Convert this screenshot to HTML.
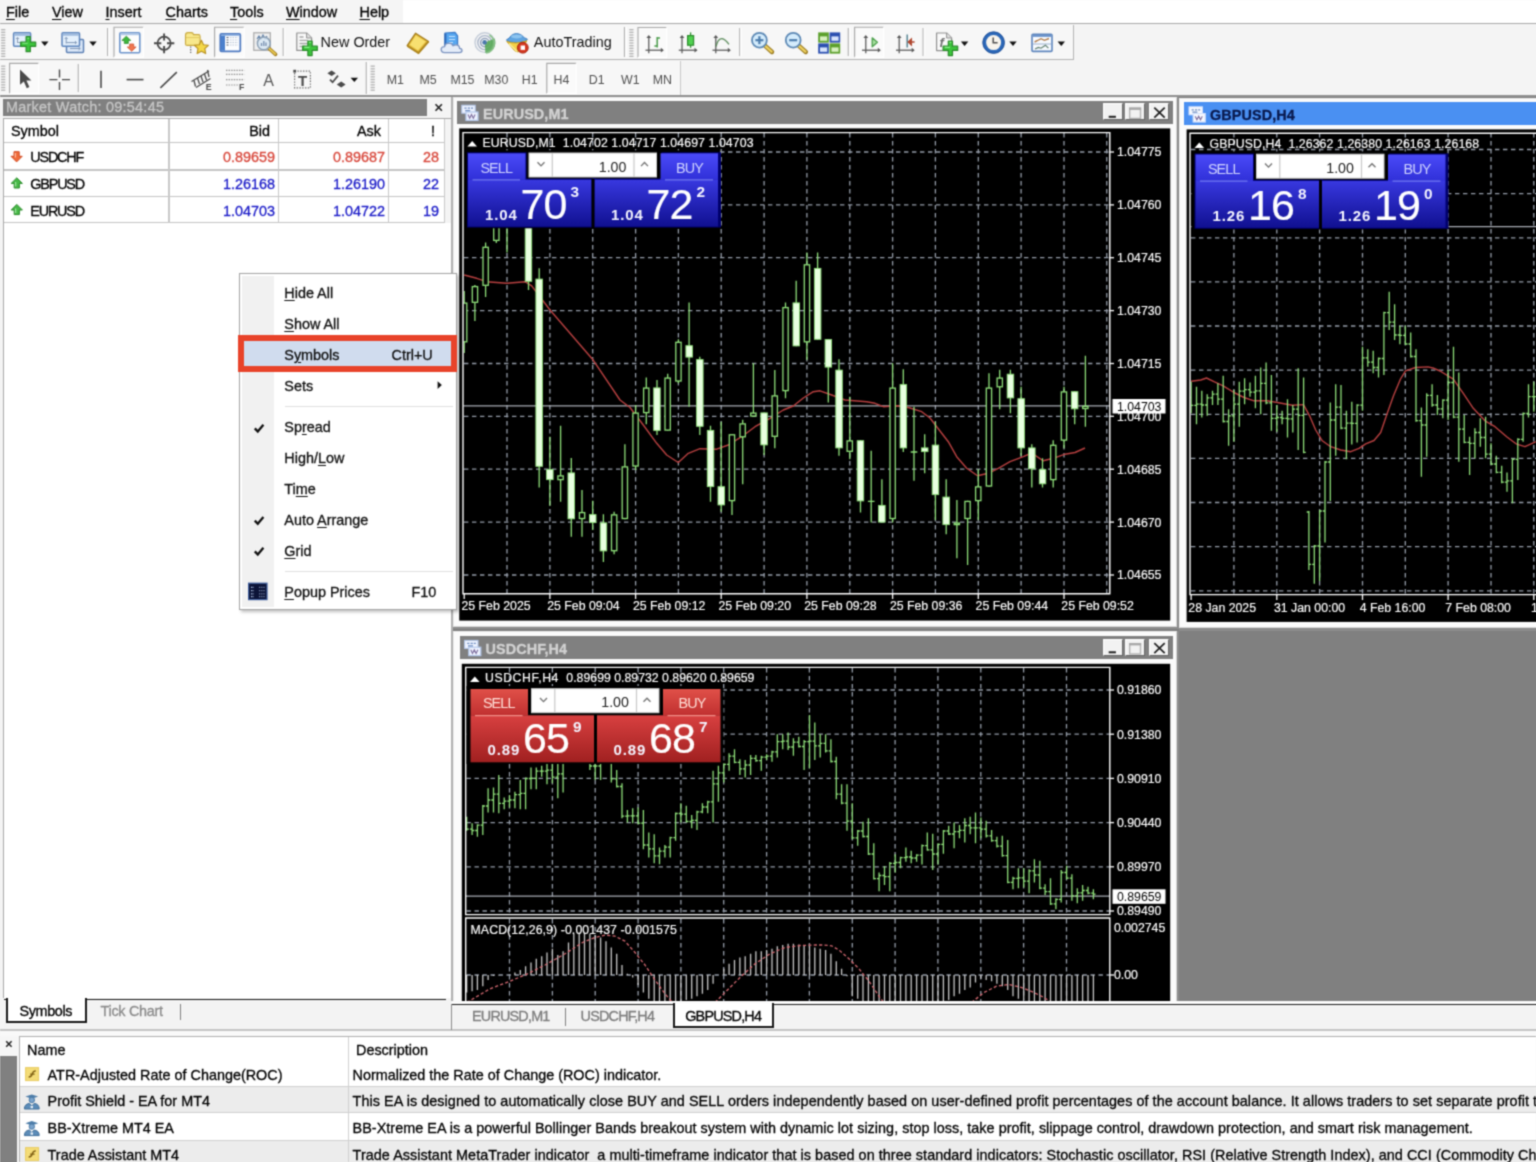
<!DOCTYPE html><html><head><meta charset="utf-8"><title>MetaTrader 4</title><style>
*{box-sizing:border-box;margin:0;padding:0}
html,body{width:1536px;height:1162px;background:#f4f4f4}
body{overflow:hidden}
body{font-family:'Liberation Sans',sans-serif;font-size:14.4px;color:#000;position:relative;line-height:1}
.a{position:absolute;white-space:pre}
.t{position:absolute;white-space:pre;line-height:16px;height:16px;-webkit-text-stroke:0.3px currentColor}
u{text-decoration:underline;text-underline-offset:1.6px;text-decoration-thickness:1.2px}
#menubar{left:0;top:0;width:403px;height:23px;background:#f5f5f5}
#menuw{left:403px;top:0;width:1147px;height:23px;background:#fff}
.hl{position:absolute;height:1.3px;background:#a8a8a8}
.vl{position:absolute;width:1.3px;background:#a8a8a8}
.mw td{}
svg{position:absolute;left:0;top:0;overflow:visible}
svg text[fill="#fff"]{stroke:#fff;stroke-width:.16px}
#root{position:absolute;left:-10px;top:-10px;width:1556px;height:1182px;overflow:hidden;background:#f4f4f4;filter:url(#soft)}
#page{position:absolute;left:10px;top:10px;width:1536px;height:1162px}
#clip{position:absolute;left:0;top:0;width:1536px;height:1162px;overflow:hidden}
.btn{position:absolute;border:1.3px solid;border-color:#a0a0a0 #fff #fff #a0a0a0;background:#f8f8f8}
.grip{position:absolute;width:4.5px;background:repeating-linear-gradient(to bottom,#b8b8b8 0 1.3px,transparent 1.3px 2.67px)}
.tb{position:absolute;font-size:12.6px;color:#505050;line-height:16px;white-space:pre}
.wb{position:absolute;background:#f2f2f2;border:1.3px solid;border-color:#fff #686868 #686868 #fff;width:19.7px;height:17px}
</style></head><body><svg width="0" height="0" style="position:absolute"><defs><filter id="soft" x="0" y="0" width="100%" height="100%" color-interpolation-filters="sRGB"><feConvolveMatrix order="3" kernelMatrix="0.04 0.12 0.04 0.12 0.36 0.12 0.04 0.12 0.04" edgeMode="duplicate" preserveAlpha="true"/></filter></defs></svg><div id="clip"><div id="root"><div id="page">
<div class="a" id="menubar"></div><div class="a" id="menuw"></div>
<div class="t" style="left:6px;top:4.0px;font-size:14.4px;color:#000;"><u>F</u>ile</div>
<div class="t" style="left:52px;top:4.0px;font-size:14.4px;color:#000;"><u>V</u>iew</div>
<div class="t" style="left:105.5px;top:4.0px;font-size:14.4px;color:#000;"><u>I</u>nsert</div>
<div class="t" style="left:165.5px;top:4.0px;font-size:14.4px;color:#000;"><u>C</u>harts</div>
<div class="t" style="left:230px;top:4.0px;font-size:14.4px;color:#000;"><u>T</u>ools</div>
<div class="t" style="left:286px;top:4.0px;font-size:14.4px;color:#000;"><u>W</u>indow</div>
<div class="t" style="left:359.5px;top:4.0px;font-size:14.4px;color:#000;"><u>H</u>elp</div>
<div class="hl" style="left:0;top:22.8px;width:1550px"></div>
<div class="a" style="left:0;top:24px;width:1550px;height:72px;background:#f4f4f4"></div>
<div class="a" style="left:0;top:24.5px;width:1073px;height:34.5px;background:#f7f7f7"></div>
<div class="a" style="left:0;top:60.5px;width:680px;height:34.5px;background:#f7f7f7"></div>
<div class="hl" style="left:0;top:59px;width:1073px;background:#b4b4b4"></div>
<div class="vl" style="left:1072.5px;top:25px;height:34.5px;background:#b4b4b4"></div>
<div class="vl" style="left:679.5px;top:61px;height:34.5px;background:#c8c8c8"></div>
<div class="hl" style="left:0;top:95.2px;width:1550px;background:#909090;height:2px"></div>
<svg width="1536" height="100" viewBox="0 0 1536 100"><rect x="1.1" y="29.00" width="4.2" height="1.35" fill="#b4b4b4"/><rect x="1.1" y="31.67" width="4.2" height="1.35" fill="#b4b4b4"/><rect x="1.1" y="34.33" width="4.2" height="1.35" fill="#b4b4b4"/><rect x="1.1" y="37.00" width="4.2" height="1.35" fill="#b4b4b4"/><rect x="1.1" y="39.67" width="4.2" height="1.35" fill="#b4b4b4"/><rect x="1.1" y="42.34" width="4.2" height="1.35" fill="#b4b4b4"/><rect x="1.1" y="45.00" width="4.2" height="1.35" fill="#b4b4b4"/><rect x="1.1" y="47.67" width="4.2" height="1.35" fill="#b4b4b4"/><rect x="1.1" y="50.34" width="4.2" height="1.35" fill="#b4b4b4"/><rect x="1.1" y="53.00" width="4.2" height="1.35" fill="#b4b4b4"/><rect x="1.1" y="55.67" width="4.2" height="1.35" fill="#b4b4b4"/><rect x="1.1" y="65.50" width="4.2" height="1.35" fill="#b4b4b4"/><rect x="1.1" y="68.17" width="4.2" height="1.35" fill="#b4b4b4"/><rect x="1.1" y="70.83" width="4.2" height="1.35" fill="#b4b4b4"/><rect x="1.1" y="73.50" width="4.2" height="1.35" fill="#b4b4b4"/><rect x="1.1" y="76.17" width="4.2" height="1.35" fill="#b4b4b4"/><rect x="1.1" y="78.84" width="4.2" height="1.35" fill="#b4b4b4"/><rect x="1.1" y="81.50" width="4.2" height="1.35" fill="#b4b4b4"/><rect x="1.1" y="84.17" width="4.2" height="1.35" fill="#b4b4b4"/><rect x="1.1" y="86.84" width="4.2" height="1.35" fill="#b4b4b4"/><rect x="1.1" y="89.50" width="4.2" height="1.35" fill="#b4b4b4"/><rect x="13.6" y="32.7" width="17" height="13.6" rx="1" fill="#e4f0fc" stroke="#5c84bc" stroke-width="1.5"/><rect x="14.3" y="33.4" width="15.6" height="2.4" fill="#9cb8dc"/><path d="M17.5 43v-5.5M16 39l1.5 -1.6l1.5 1.6M17.5 42.5h6" stroke="#90a0b8" stroke-width="1" fill="none"/><path d="M26.099999999999998 36.7h4.2v5.4h5.4v4.2h-5.4v5.4h-4.2v-5.4h-5.4v-4.2h5.4z" fill="#3cc43c" stroke="#2a8a2a" stroke-width="1.2" stroke-linejoin="round"/><path d="M27.299999999999997 38.2h1.8000000000000003M22.3 43.300000000000004h5.4" stroke="#8cf08c" stroke-width="1.1" fill="none"/><path d="M41.099999999999994 41.6h7.4l-3.7 4.3z" fill="#111"/><rect x="66.5" y="39.6" width="17" height="13" rx="1" fill="#dce8f8" stroke="#5c80b4" stroke-width="1.5"/><path d="M70 48.5h10M78.5 47l1.8 1.5l-1.8 1.5" stroke="#8098b8" stroke-width="1" fill="none"/><rect x="62" y="32.8" width="17.5" height="13.4" rx="1" fill="#e4f0fc" stroke="#5c84bc" stroke-width="1.5"/><rect x="62.7" y="33.5" width="16.1" height="2.2" fill="#9cb8dc"/><path d="M66.2 43.5v-6M64.8 39l1.4 -1.6l1.4 1.6M66.2 42.6h10M75 41.2l1.6 1.4l-1.6 1.4" stroke="#8098b8" stroke-width="1" fill="none"/><path d="M89.3 41.6h7.4l-3.7 4.3z" fill="#111"/><line x1="107.6" y1="28" x2="107.6" y2="56" stroke="#b0b0b0" stroke-width="1.15"/><line x1="108.89999999999999" y1="28" x2="108.89999999999999" y2="56" stroke="#fff" stroke-width="1.3"/><rect x="114" y="27.2" width="29.5" height="30" fill="#fafafa"/><path d="M114 57.2V27.2H143.5" fill="none" stroke="#a8a8a8" stroke-width="1.15"/><path d="M143.5 27.2V57.2H114" fill="none" stroke="#ffffff" stroke-width="1.3"/><rect x="119.8" y="32.8" width="20" height="20" rx="1.2" fill="#fdfdfd" stroke="#6c94cc" stroke-width="1.6"/><rect x="120.5" y="33.4" width="18.6" height="1.8" fill="#b0c8e8"/><path d="M126.3 36.2l4.4 4.2h-2.4v3h-4v-3h-2.4z" fill="#3cb83c" stroke="#2c8c2c" stroke-width=".8"/><path d="M131.7 51.2l-4.4 -4.2h2.4v-3h4v3h2.4z" fill="#f07850" stroke="#d05030" stroke-width=".8"/><g stroke="#4a4a4a" fill="none"><circle cx="164.1" cy="43.3" r="6.6" stroke-width="1.7"/><path d="M164.1 33.6v7M164.1 46v7.3M154 43.3h7.3M167 43.3h7.3" stroke-width="1.9"/></g><path d="M185.5 35.2q0 -2.6 2.4 -2.6h3.6q1.6 0 2 2h5q1.6 0 1.6 1.8v7.6q0 1.4 -1.4 1.4h-11.6q-1.6 0 -1.6 -1.4z" fill="#f8e88c" stroke="#c8a840" stroke-width="1.1"/><path d="M186 37.6h13.6" stroke="#e0c860" stroke-width="1"/><path d="M190.7 46.5v7" stroke="#606060" stroke-width="1.2" stroke-dasharray="1.3 1.3"/><path d="M201.4 40.2l2.1 4.5l4.9 .6l-3.6 3.4l.9 4.9l-4.3 -2.4l-4.3 2.4l.9 -4.9l-3.6 -3.4l4.9 -.6z" fill="#f4d848" stroke="#b89020" stroke-width="1.1" stroke-linejoin="round"/><rect x="214.6" y="27.2" width="29.5" height="30" fill="#fafafa"/><path d="M214.6 57.2V27.2H244.1" fill="none" stroke="#a8a8a8" stroke-width="1.15"/><path d="M244.1 27.2V57.2H214.6" fill="none" stroke="#ffffff" stroke-width="1.3"/><rect x="220.3" y="33.8" width="20" height="17.6" rx="1.2" fill="#fcfdff" stroke="#4c78c0" stroke-width="1.7"/><rect x="221" y="34.5" width="4" height="16.2" fill="#4c80cc"/><rect x="221" y="34.5" width="18.6" height="1.4" fill="#8cb0e0"/><path d="M226.5 37.5h2M226.5 40h2M226.5 42.5h2M226.5 45h2" stroke="#505868" stroke-width="1.2"/><path d="M230 37.5h8M230 40h8M230 42.5h8M230 45h8" stroke="#b8c4d4" stroke-width="1" stroke-dasharray="1.5 1"/><rect x="253.8" y="32.8" width="16.5" height="17.5" fill="#f0f0f0" stroke="#a8a8a8" stroke-width="1.2"/><path d="M257 39l2 -3l2 3l2 -4l2 4l2 -3" stroke="#6080a8" stroke-width="1.2" fill="none"/><line x1="268.5" y1="48" x2="275.6" y2="54.4" stroke="#a07c20" stroke-width="3.6" stroke-linecap="round"/><line x1="269" y1="48.4" x2="275.2" y2="54" stroke="#e8c850" stroke-width="1.8" stroke-linecap="round"/><circle cx="263.8" cy="43.4" r="6.4" fill="#d8e8f4" fill-opacity=".85" stroke="#8ca0b4" stroke-width="1.5"/><path d="M261.5 43v3M263.8 41v5M266 42.5v3.5" stroke="#7890b0" stroke-width="1.3"/><line x1="283.2" y1="28" x2="283.2" y2="56" stroke="#b0b0b0" stroke-width="1.15"/><line x1="284.5" y1="28" x2="284.5" y2="56" stroke="#fff" stroke-width="1.3"/><path d="M296.8 33h9.8l5 5v12.399999999999999h-14.8z" fill="#fafafa" stroke="#909090" stroke-width="1.2" stroke-linejoin="round"/><path d="M306.6 33v5h5" fill="#e0e0e0" stroke="#909090" stroke-width="1"/><path d="M299.5 37h4M299.5 40.4h8.5M299.5 43.5h8.5M299.5 46.5h5" stroke="#a8a8a8" stroke-width="1.3"/><path d="M307.9 41.0h4.2v5.199999999999999h5.199999999999999v4.2h-5.199999999999999v5.199999999999999h-4.2v-5.199999999999999h-5.199999999999999v-4.2h5.199999999999999z" fill="#3cc43c" stroke="#2a8a2a" stroke-width="1.2" stroke-linejoin="round"/><path d="M309.09999999999997 42.5h1.8000000000000003M304.3 47.4h5.199999999999999" stroke="#8cf08c" stroke-width="1.1" fill="none"/><text x="320.6" y="46.7" style="font-family:'Liberation Sans',sans-serif;font-size:14.4px" fill="#101010">New Order</text><path d="M415.5 33.3l13 8.2l-10 11.6l-11.3 -7.4z" fill="#e8c040" stroke="#a07818" stroke-width="1.3" stroke-linejoin="round"/><path d="M415.8 35.4l9.8 6.2l-7.6 8.6l-8.2 -5.4z" fill="#f8e070"/><path d="M407.5 45.8l11 7.2l10 -11.6" fill="none" stroke="#b08820" stroke-width="2"/><path d="M445 33l10 -.6l2.6 3.4v12h-12.6z" fill="#58a8f0" stroke="#3878c8" stroke-width="1.2" stroke-linejoin="round"/><path d="M449 36.5h6M449 39.5h6M449 42.5h4" stroke="#c4e0fc" stroke-width="1.2"/><path d="M445.4 33.4v14" stroke="#2c68b8" stroke-width="2"/><path d="M444.6 52.6q-3.4 0 -3.4 -3q0 -3 3.4 -3q.6 -3.4 4.4 -3.4q3 0 4 2.6q1.4 -1 3 -1q3.4 0 3.6 3.6q2.4 .2 2.4 2.2q0 2 -2.6 2z" fill="#e4ecf8" stroke="#7c94c0" stroke-width="1.3" stroke-linejoin="round"/><circle cx="484.8" cy="42.6" r="9.8" fill="none" stroke="#c4ccd8" stroke-width="1.4"/><circle cx="484.8" cy="42.6" r="7" fill="none" stroke="#a8b4c8" stroke-width="1.4"/><circle cx="484.8" cy="42.6" r="4.2" fill="none" stroke="#8c9cb8" stroke-width="1.4"/><path d="M484.8 42.6L485.4 53A10.4 10.4 0 0 0 494.6 38.6z" fill="#58a858" fill-opacity=".9"/><path d="M489.5 35a9.8 9.8 0 0 1 -3.6 18" fill="none" stroke="#88c088" stroke-width="1.5"/><circle cx="484.6" cy="42.4" r="2.3" fill="#4c78ac"/><path d="M506.4 40q3 -1.6 5 -4.6q5 -3.6 10.4 0q2 2.6 5.6 3.8q-1 3 -10 3.4q-8 0 -11 -2.6z" fill="#60a4e0" stroke="#3c7cc0" stroke-width="1"/><ellipse cx="516.6" cy="36.4" rx="5.6" ry="2" fill="#8cc4f0"/><path d="M506.8 41.4q9 3.4 20 -.6l-6 9.4q-3 3.2 -6.6 0z" fill="#f4d048" stroke="#c8a020" stroke-width="1"/><path d="M509 43.5l8 8" stroke="#f8e890" stroke-width="1.6"/><circle cx="522.8" cy="47.7" r="5.4" fill="#d43820" stroke="#a82410" stroke-width="1"/><rect x="520.6" y="45.5" width="4.4" height="4.4" fill="#fff"/><text x="533.8" y="46.7" style="font-family:'Liberation Sans',sans-serif;font-size:14.4px" fill="#101010">AutoTrading</text><line x1="624.5" y1="27" x2="624.5" y2="57" stroke="#b0b0b0" stroke-width="1.15"/><line x1="625.8" y1="27" x2="625.8" y2="57" stroke="#fff" stroke-width="1.3"/><rect x="629.3" y="29.00" width="4.2" height="1.35" fill="#b4b4b4"/><rect x="629.3" y="31.67" width="4.2" height="1.35" fill="#b4b4b4"/><rect x="629.3" y="34.33" width="4.2" height="1.35" fill="#b4b4b4"/><rect x="629.3" y="37.00" width="4.2" height="1.35" fill="#b4b4b4"/><rect x="629.3" y="39.67" width="4.2" height="1.35" fill="#b4b4b4"/><rect x="629.3" y="42.34" width="4.2" height="1.35" fill="#b4b4b4"/><rect x="629.3" y="45.00" width="4.2" height="1.35" fill="#b4b4b4"/><rect x="629.3" y="47.67" width="4.2" height="1.35" fill="#b4b4b4"/><rect x="629.3" y="50.34" width="4.2" height="1.35" fill="#b4b4b4"/><rect x="629.3" y="53.00" width="4.2" height="1.35" fill="#b4b4b4"/><rect x="629.3" y="55.67" width="4.2" height="1.35" fill="#b4b4b4"/><rect x="638" y="27.5" width="28.6" height="30" fill="#fafafa"/><path d="M638 57.5V27.5H666.6" fill="none" stroke="#a8a8a8" stroke-width="1.15"/><path d="M666.6 27.5V57.5H638" fill="none" stroke="#ffffff" stroke-width="1.3"/><g stroke="#585858" stroke-width="1.25" fill="#585858"><line x1="648.8" y1="36" x2="648.8" y2="53.3"/><line x1="645.5" y1="50.2" x2="662.8" y2="50.2"/><path d="M646.4 38L648.8 35L651.1999999999999 38z" stroke="none"/><path d="M660.8 47.800000000000004L663.8 50.2L660.8 52.6z" stroke="none"/></g><path d="M657.2 37v10.6M657.2 38h2.8M654.4 46h2.8" stroke="#4c9c4c" stroke-width="1.5" fill="none"/><g stroke="#585858" stroke-width="1.25" fill="#585858"><line x1="682" y1="36" x2="682" y2="53.3"/><line x1="678.8" y1="50.2" x2="696.5" y2="50.2"/><path d="M679.6 38L682 35L684.4 38z" stroke="none"/><path d="M694.5 47.800000000000004L697.5 50.2L694.5 52.6z" stroke="none"/></g><line x1="690.6" y1="32.4" x2="690.6" y2="47.8" stroke="#2c8c2c" stroke-width="1.3"/><rect x="687.6" y="35.6" width="6" height="9.6" fill="#50d050" stroke="#2c8c2c" stroke-width="1.2"/><g stroke="#585858" stroke-width="1.25" fill="#585858"><line x1="715.8" y1="36" x2="715.8" y2="53.3"/><line x1="712.5" y1="50.2" x2="729.8" y2="50.2"/><path d="M713.4 38L715.8 35L718.1999999999999 38z" stroke="none"/><path d="M727.8 47.800000000000004L730.8 50.2L727.8 52.6z" stroke="none"/></g><path d="M716 46.5q2 -8 6 -7.8q3 .6 7 5.6" stroke="#5c8c5c" stroke-width="1.3" fill="none"/><line x1="739.7" y1="28" x2="739.7" y2="56" stroke="#b0b0b0" stroke-width="1.15"/><line x1="741.0" y1="28" x2="741.0" y2="56" stroke="#fff" stroke-width="1.3"/><line x1="764.9" y1="45.7" x2="772.0" y2="52.0" stroke="#9a7a20" stroke-width="4.4" stroke-linecap="round"/><line x1="765.4" y1="46.2" x2="771.6" y2="51.6" stroke="#ecd060" stroke-width="2.4" stroke-linecap="round"/><circle cx="759.4" cy="40.2" r="7.4" fill="#d4ecfc" stroke="#5c88b4" stroke-width="1.8"/><line x1="755.4" y1="40.2" x2="763.4" y2="40.2" stroke="#4c7cac" stroke-width="2.2"/><line x1="759.4" y1="36.2" x2="759.4" y2="44.2" stroke="#4c7cac" stroke-width="2.2"/><line x1="798.7" y1="45.7" x2="805.8000000000001" y2="52.0" stroke="#9a7a20" stroke-width="4.4" stroke-linecap="round"/><line x1="799.2" y1="46.2" x2="805.4000000000001" y2="51.6" stroke="#ecd060" stroke-width="2.4" stroke-linecap="round"/><circle cx="793.2" cy="40.2" r="7.4" fill="#d4ecfc" stroke="#5c88b4" stroke-width="1.8"/><line x1="789.2" y1="40.2" x2="797.2" y2="40.2" stroke="#4c7cac" stroke-width="2.2"/><rect x="818.2" y="32.4" width="10.6" height="10.2" fill="#5ca02c"/><rect x="820.0" y="36.4" width="7.2" height="4.4" fill="#d8f0c0"/><rect x="829.6" y="32.4" width="10.6" height="10.2" fill="#2c50b0"/><rect x="831.4" y="36.4" width="7.2" height="4.4" fill="#d8e4fc"/><rect x="818.2" y="43.4" width="10.6" height="10.2" fill="#2c50b0"/><rect x="820.0" y="47.4" width="7.2" height="4.4" fill="#d8e4fc"/><rect x="829.6" y="43.4" width="10.6" height="10.2" fill="#5ca02c"/><rect x="831.4" y="47.4" width="7.2" height="4.4" fill="#d8f0c0"/><line x1="848.3" y1="28" x2="848.3" y2="56" stroke="#b0b0b0" stroke-width="1.15"/><line x1="849.5999999999999" y1="28" x2="849.5999999999999" y2="56" stroke="#fff" stroke-width="1.3"/><rect x="854.6" y="27.2" width="29" height="30" fill="#fafafa"/><path d="M854.6 57.2V27.2H883.6" fill="none" stroke="#a8a8a8" stroke-width="1.15"/><path d="M883.6 27.2V57.2H854.6" fill="none" stroke="#ffffff" stroke-width="1.3"/><g stroke="#585858" stroke-width="1.25" fill="#585858"><line x1="865.8" y1="36" x2="865.8" y2="53.3"/><line x1="862" y1="50.2" x2="879.8" y2="50.2"/><path d="M863.4 38L865.8 35L868.1999999999999 38z" stroke="none"/><path d="M877.8 47.800000000000004L880.8 50.2L877.8 52.6z" stroke="none"/></g><path d="M872.2 37.8l5.2 4.5l-5.2 4.5z" fill="#a8e0a0" stroke="#4ca04c" stroke-width="1.3" stroke-linejoin="round"/><g stroke="#585858" stroke-width="1.25" fill="#585858"><line x1="899.2" y1="36" x2="899.2" y2="53.3"/><line x1="896" y1="50.2" x2="913.7" y2="50.2"/><path d="M896.8000000000001 38L899.2 35L901.6 38z" stroke="none"/><path d="M911.7 47.800000000000004L914.7 50.2L911.7 52.6z" stroke="none"/></g><line x1="907.2" y1="34.6" x2="907.2" y2="47.6" stroke="#4c7c8c" stroke-width="1.4"/><path d="M914.6 42h-6M911.4 39l-3.2 3l3.2 3z" stroke="#b04830" stroke-width="1.3" fill="#b04830"/><line x1="923.1" y1="28" x2="923.1" y2="56" stroke="#b0b0b0" stroke-width="1.15"/><line x1="924.4" y1="28" x2="924.4" y2="56" stroke="#fff" stroke-width="1.3"/><path d="M936.6 33h10l5 5v12.600000000000001h-15z" fill="#fafafa" stroke="#909090" stroke-width="1.2" stroke-linejoin="round"/><path d="M946.6 33v5h5" fill="#e0e0e0" stroke="#909090" stroke-width="1"/><text x="939.4" y="46.6" style="font-family:'Liberation Sans',sans-serif;font-size:13px;font-style:italic;font-weight:bold" fill="#707070">f</text><path d="M948.3 41.0h4.2v5.199999999999999h5.199999999999999v4.2h-5.199999999999999v5.199999999999999h-4.2v-5.199999999999999h-5.199999999999999v-4.2h5.199999999999999z" fill="#3cc43c" stroke="#2a8a2a" stroke-width="1.2" stroke-linejoin="round"/><path d="M949.5 42.5h1.8000000000000003M944.7 47.4h5.199999999999999" stroke="#8cf08c" stroke-width="1.1" fill="none"/><path d="M960.9 41.6h7.4l-3.7 4.3z" fill="#111"/><circle cx="993.6" cy="42.6" r="9.2" fill="#f8f4ec" stroke="#2c68b8" stroke-width="3.4"/><circle cx="993.6" cy="42.6" r="10.8" fill="none" stroke="#1c4c94" stroke-width=".9"/><path d="M993.2 37.5v5.2h4.4" stroke="#505050" stroke-width="1.5" fill="none"/><path d="M1009.3 41.6h7.4l-3.7 4.3z" fill="#111"/><rect x="1032" y="34.2" width="20" height="17.2" rx="1" fill="#f8fbff" stroke="#5c84bc" stroke-width="1.6"/><rect x="1032.8" y="34.9" width="18.4" height="2" fill="#6c94cc"/><path d="M1033 44h18" stroke="#9cb0cc" stroke-width="1"/><path d="M1034.6 42l3 -1.5l3.4 -1.8l3.4 1.6l4.6 -1.8" stroke="#b07c4c" stroke-width="1.4" fill="none"/><path d="M1035 49l3.4 -1.6l2.6 .8l4.4 -3l3 3" stroke="#5c7c6c" stroke-width="1.2" fill="none"/><path d="M1057.6 41.6h7.4l-3.7 4.3z" fill="#111"/><rect x="9.6" y="63.4" width="29" height="30" fill="#fafafa"/><path d="M9.6 93.4V63.4H38.6" fill="none" stroke="#a8a8a8" stroke-width="1.15"/><path d="M38.6 63.4V93.4H9.6" fill="none" stroke="#ffffff" stroke-width="1.3"/><path d="M20 69.4v15.4l3.8 -3.4l3 6.8l2.6 -1.2l-3 -6.6h5z" fill="#4a4a4a"/><path d="M59.5 69.4v8M59.5 82v8M49.4 79.6h8M62 79.6h8" stroke="#4a4a4a" stroke-width="1.4"/><line x1="78.3" y1="64" x2="78.3" y2="92" stroke="#b0b0b0" stroke-width="1.15"/><line x1="79.6" y1="64" x2="79.6" y2="92" stroke="#fff" stroke-width="1.3"/><line x1="101" y1="70.8" x2="101" y2="88" stroke="#4a4a4a" stroke-width="1.6"/><line x1="126.6" y1="79.6" x2="143.5" y2="79.6" stroke="#4a4a4a" stroke-width="1.6"/><line x1="160.4" y1="87.8" x2="176.8" y2="72.2" stroke="#4a4a4a" stroke-width="1.6"/><g stroke="#4a4a4a" stroke-width="1.3" fill="none"><path d="M191.5 81.5l17.5 -10.5M196 87.5l14.5 -9"/><path d="M194 80.5l1.5 6M197.5 78l2 6M201 76l2 6M204.5 74l2 6M207.5 70l1.5 7"/></g><text x="205.8" y="90.4" style="font-family:'Liberation Sans',sans-serif;font-size:8.8px;font-weight:bold" fill="#4a4a4a">E</text><g stroke="#8c8c8c" stroke-width="1.2" stroke-dasharray="1.4 1.2"><path d="M226 70.4h18.4M226 74.4h18.4M226 79.6h18.4M226 85h12.5"/></g><text x="239" y="90.4" style="font-family:'Liberation Sans',sans-serif;font-size:8.8px;font-weight:bold" fill="#4a4a4a">F</text><text x="268.6" y="85.6" text-anchor="middle" style="font-family:'Liberation Sans',sans-serif;font-size:16px" fill="#585858">A</text><rect x="294.6" y="71.2" width="15.8" height="16.6" fill="none" stroke="#6c6c6c" stroke-width="1.2" stroke-dasharray="1.4 1.4"/><rect x="293.3" y="69.8" width="2.8" height="2.8" fill="#4a4a4a"/><text x="302.6" y="85.8" text-anchor="middle" style="font-family:'Liberation Sans',sans-serif;font-size:15px;font-weight:bold" fill="#4a4a4a">T</text><path d="M331.6 70.4l4.2 2.8l-4.2 2.8l-4.2 -2.8z" fill="#4a4a4a"/><path d="M341.2 81.6l4.4 2.9l-4.4 2.9l-4.4 -2.9z" fill="#4a4a4a"/><path d="M330 79.6l2.6 2.6l5.4 -6.6" stroke="#4a4a4a" stroke-width="1.7" fill="none"/><path d="M350.6 77.8h7.4l-3.7 4.3z" fill="#111"/><line x1="366.3" y1="62" x2="366.3" y2="94" stroke="#b0b0b0" stroke-width="1.15"/><line x1="367.6" y1="62" x2="367.6" y2="94" stroke="#fff" stroke-width="1.3"/><rect x="370.6" y="65.50" width="4.2" height="1.35" fill="#b4b4b4"/><rect x="370.6" y="68.17" width="4.2" height="1.35" fill="#b4b4b4"/><rect x="370.6" y="70.83" width="4.2" height="1.35" fill="#b4b4b4"/><rect x="370.6" y="73.50" width="4.2" height="1.35" fill="#b4b4b4"/><rect x="370.6" y="76.17" width="4.2" height="1.35" fill="#b4b4b4"/><rect x="370.6" y="78.84" width="4.2" height="1.35" fill="#b4b4b4"/><rect x="370.6" y="81.50" width="4.2" height="1.35" fill="#b4b4b4"/><rect x="370.6" y="84.17" width="4.2" height="1.35" fill="#b4b4b4"/><rect x="370.6" y="86.84" width="4.2" height="1.35" fill="#b4b4b4"/><rect x="370.6" y="89.50" width="4.2" height="1.35" fill="#b4b4b4"/><rect x="546.8" y="63.4" width="29.4" height="30" fill="#fafafa"/><path d="M546.8 93.4V63.4H576.1999999999999" fill="none" stroke="#a8a8a8" stroke-width="1.15"/><path d="M576.1999999999999 63.4V93.4H546.8" fill="none" stroke="#ffffff" stroke-width="1.3"/><text x="386.7" y="84.3" style="font-family:'Liberation Sans',sans-serif;font-size:12.4px" fill="#505050">M1</text><text x="419.5" y="84.3" style="font-family:'Liberation Sans',sans-serif;font-size:12.4px" fill="#505050">M5</text><text x="450.4" y="84.3" style="font-family:'Liberation Sans',sans-serif;font-size:12.4px" fill="#505050">M15</text><text x="484.2" y="84.3" style="font-family:'Liberation Sans',sans-serif;font-size:12.4px" fill="#505050">M30</text><text x="521.7" y="84.3" style="font-family:'Liberation Sans',sans-serif;font-size:12.4px" fill="#505050">H1</text><text x="553.5" y="84.3" style="font-family:'Liberation Sans',sans-serif;font-size:12.4px" fill="#505050">H4</text><text x="588.8" y="84.3" style="font-family:'Liberation Sans',sans-serif;font-size:12.4px" fill="#505050">D1</text><text x="621" y="84.3" style="font-family:'Liberation Sans',sans-serif;font-size:12.4px" fill="#505050">W1</text><text x="652.8" y="84.3" style="font-family:'Liberation Sans',sans-serif;font-size:12.4px" fill="#505050">MN</text></svg>
<div class="a" style="left:0;top:97px;width:452px;height:935px;background:#f4f4f4"></div>
<div class="a" style="left:3px;top:99.3px;width:424px;height:16.6px;background:#808080"></div>
<div class="t" style="left:6px;top:99.0px;font-size:14.4px;color:#c6c6c6;letter-spacing:0.27px">Market Watch: 09:54:45</div>
<svg width="1536" height="1162" style="pointer-events:none"><path d="M435.5 104.3l6.4 6.4m0 -6.4l-6.4 6.4" stroke="#202020" stroke-width="1.6" fill="none"/></svg>
<div class="a" style="left:3px;top:117.8px;width:448px;height:880.2px;background:#fff;border-left:1.3px solid #a8a8a8;border-top:1.3px solid #a8a8a8"></div>
<div class="a" style="left:444.5px;top:222px;width:7px;height:776px;background:#fff"></div>
<div class="a" style="left:445px;top:118.5px;width:7px;height:104px;background:#f4f4f4"></div>
<div class="hl" style="left:4px;top:142.2px;width:440.5px;background:#c4c4c4"></div>
<div class="hl" style="left:4px;top:169.3px;width:440.5px;background:#c4c4c4"></div>
<div class="hl" style="left:4px;top:196px;width:440.5px;background:#c4c4c4"></div>
<div class="hl" style="left:4px;top:221.6px;width:440.5px;background:#c4c4c4"></div>
<div class="vl" style="left:168.3px;top:119px;height:103.5px;background:#c8c8c8"></div>
<div class="vl" style="left:278.2px;top:119px;height:103.5px;background:#c8c8c8"></div>
<div class="vl" style="left:388.2px;top:119px;height:103.5px;background:#c8c8c8"></div>
<div class="vl" style="left:444px;top:119px;height:103.5px;background:#c8c8c8"></div>
<div class="t" style="left:11px;top:123.0px;font-size:14.4px;color:#000;">Symbol</div>
<div class="t" style="left:270px;top:123.0px;font-size:14.4px;color:#000;transform:translateX(-100%)">Bid</div>
<div class="t" style="left:381px;top:123.0px;font-size:14.4px;color:#000;transform:translateX(-100%)">Ask</div>
<div class="t" style="left:431px;top:123.0px;font-size:14.4px;color:#000;">!</div>
<div class="t" style="left:30.2px;top:149.0px;font-size:14.4px;color:#000;letter-spacing:-1.15px">USDCHF</div>
<div class="t" style="left:275px;top:149.0px;font-size:14.4px;color:#d8483c;transform:translateX(-100%)">0.89659</div>
<div class="t" style="left:385px;top:149.0px;font-size:14.4px;color:#d8483c;transform:translateX(-100%)">0.89687</div>
<div class="t" style="left:439px;top:149.0px;font-size:14.4px;color:#d8483c;transform:translateX(-100%)">28</div>
<div class="t" style="left:30.2px;top:176.0px;font-size:14.4px;color:#000;letter-spacing:-1.15px">GBPUSD</div>
<div class="t" style="left:275px;top:176.0px;font-size:14.4px;color:#1c1cc8;transform:translateX(-100%)">1.26168</div>
<div class="t" style="left:385px;top:176.0px;font-size:14.4px;color:#1c1cc8;transform:translateX(-100%)">1.26190</div>
<div class="t" style="left:439px;top:176.0px;font-size:14.4px;color:#1c1cc8;transform:translateX(-100%)">22</div>
<div class="t" style="left:30.2px;top:203.0px;font-size:14.4px;color:#000;letter-spacing:-1.15px">EURUSD</div>
<div class="t" style="left:275px;top:203.0px;font-size:14.4px;color:#1c1cc8;transform:translateX(-100%)">1.04703</div>
<div class="t" style="left:385px;top:203.0px;font-size:14.4px;color:#1c1cc8;transform:translateX(-100%)">1.04722</div>
<div class="t" style="left:439px;top:203.0px;font-size:14.4px;color:#1c1cc8;transform:translateX(-100%)">19</div>
<svg width="460" height="240" viewBox="0 0 460 240"><path d="M16.6 161.9l5.6 -5.6h-3v-4.6h-5.2v4.6h-3z" fill="#f06c3c" stroke="#d04820" stroke-width="1" stroke-linejoin="round"/><path d="M15.400000000000002 152.9v4.5" stroke="#ffb89c" stroke-width="1.2"/><path d="M16.8 177.8l5.6 5.6h-3v4.6h-5.2v-4.6h-3z" fill="#48b848" stroke="#2c8c2c" stroke-width="1" stroke-linejoin="round"/><path d="M15.600000000000001 181.9v4.5" stroke="#a0e8a0" stroke-width="1.2"/><path d="M16.8 204.4l5.6 5.6h-3v4.6h-5.2v-4.6h-3z" fill="#48b848" stroke="#2c8c2c" stroke-width="1" stroke-linejoin="round"/><path d="M15.600000000000001 208.5v4.5" stroke="#a0e8a0" stroke-width="1.2"/></svg>
<div class="a" style="left:4px;top:999px;width:447px;height:31px;background:#f3f3f3"></div>
<div class="hl" style="left:4px;top:998.5px;width:442px;background:#181818;height:1.8px"></div>
<div class="a" style="left:6.4px;top:998.2px;width:80.8px;height:24.8px;background:#fff;border:2px solid #181818;border-top:none"></div>
<div class="t" style="left:19.6px;top:1003.0px;font-size:14.4px;color:#000;letter-spacing:-0.4px">Symbols</div>
<div class="t" style="left:100.6px;top:1003.0px;font-size:14.4px;color:#8a8a8a;letter-spacing:-0.3px">Tick Chart</div>
<div class="vl" style="left:179.6px;top:1004px;height:15.5px;background:#808080"></div>
<div class="vl" style="left:451.3px;top:97px;height:904px;background:#b0b0b0;width:1.6px"></div>
<div class="a" style="left:453px;top:97px;width:1097px;height:905px;background:#808080"></div>
<div class="a" style="left:453px;top:97px;width:725.8000000000001px;height:532.4px;background:#8c8c8c"></div><div class="a" style="left:453px;top:97px;width:723.7px;height:530.1px;background:#fbfbfb;border:1.2px solid #ececec;border-right-color:#d8d8d8;border-bottom-color:#d8d8d8"></div><div class="a" style="left:457px;top:100.9px;width:716.0px;height:23px;background:#808080"></div><div class="t" style="left:483px;top:106.0px;font-size:14.4px;color:#d2d2d2;font-weight:bold;letter-spacing:0.1px">EURUSD,M1</div>
<div class="a" style="left:1179.4px;top:97.6px;width:422.69999999999993px;height:533.0999999999999px;background:#8c8c8c"></div><div class="a" style="left:1179.4px;top:97.6px;width:420.5999999999999px;height:530.8px;background:#fbfbfb;border:1.2px solid #ececec;border-right-color:#d8d8d8;border-bottom-color:#d8d8d8"></div><div class="a" style="left:1184.0px;top:101.8px;width:412.2999999999999px;height:23.6px;background:#4a90f2"></div><div class="t" style="left:1210.0px;top:107.0px;font-size:14.4px;color:#08184c;font-weight:bold;letter-spacing:0.1px">GBPUSD,H4</div>
<div class="a" style="left:453px;top:630.6px;width:725.8000000000001px;height:411.7px;background:#8c8c8c"></div><div class="a" style="left:453px;top:630.6px;width:723.7px;height:409.4px;background:#fbfbfb;border:1.2px solid #ececec;border-right-color:#d8d8d8;border-bottom-color:#d8d8d8"></div><div class="a" style="left:459.5px;top:636.0px;width:713.5px;height:23px;background:#808080"></div><div class="t" style="left:485.5px;top:641.0px;font-size:14.4px;color:#d2d2d2;font-weight:bold;letter-spacing:0.1px">USDCHF,H4</div>
<svg width="1536" height="1162" viewBox="0 0 1536 1162">
<rect x="459.25" y="128.4" width="711" height="492.2" fill="#000"/><g stroke="#949ca8" stroke-width="1.3" stroke-dasharray="4.4 3.6" fill="none"><line x1="507.0" y1="133" x2="507.0" y2="593" stroke-dasharray="4.4 3.6"/><line x1="549.9" y1="133" x2="549.9" y2="593" stroke-dasharray="4.4 3.6"/><line x1="592.7" y1="133" x2="592.7" y2="593" stroke-dasharray="4.4 3.6"/><line x1="635.6" y1="133" x2="635.6" y2="593" stroke-dasharray="4.4 3.6"/><line x1="678.4" y1="133" x2="678.4" y2="593" stroke-dasharray="4.4 3.6"/><line x1="721.2" y1="133" x2="721.2" y2="593" stroke-dasharray="4.4 3.6"/><line x1="764.1" y1="133" x2="764.1" y2="593" stroke-dasharray="4.4 3.6"/><line x1="806.9" y1="133" x2="806.9" y2="593" stroke-dasharray="4.4 3.6"/><line x1="849.8" y1="133" x2="849.8" y2="593" stroke-dasharray="4.4 3.6"/><line x1="892.6" y1="133" x2="892.6" y2="593" stroke-dasharray="4.4 3.6"/><line x1="935.4" y1="133" x2="935.4" y2="593" stroke-dasharray="4.4 3.6"/><line x1="978.3" y1="133" x2="978.3" y2="593" stroke-dasharray="4.4 3.6"/><line x1="1021.1" y1="133" x2="1021.1" y2="593" stroke-dasharray="4.4 3.6"/><line x1="1064.0" y1="133" x2="1064.0" y2="593" stroke-dasharray="4.4 3.6"/><line x1="1106.8" y1="133" x2="1106.8" y2="593" stroke-dasharray="4.4 3.6"/><line x1="464" y1="152.0" x2="1109" y2="152.0"/><line x1="464" y1="204.9" x2="1109" y2="204.9"/><line x1="464" y1="257.7" x2="1109" y2="257.7"/><line x1="464" y1="310.6" x2="1109" y2="310.6"/><line x1="464" y1="363.5" x2="1109" y2="363.5"/><line x1="464" y1="416.3" x2="1109" y2="416.3"/><line x1="464" y1="469.2" x2="1109" y2="469.2"/><line x1="464" y1="522.1" x2="1109" y2="522.1"/><line x1="464" y1="575.0" x2="1109" y2="575.0"/></g><line x1="463.5" y1="405.9" x2="1110" y2="405.9" stroke="#a8acb4" stroke-width="1.3"/><clipPath id="cp1"><rect x="463.4" y="133" width="646" height="460"/></clipPath><g clip-path="url(#cp1)"><polyline points="464.2,275.0 476.7,278.3 486.7,281.7 506.7,283.3 525.0,281.7 531.7,285.8 550.0,310.0 592.5,359.2 620.0,400.0 630.0,407.5 643.3,425.0 656.7,443.3 666.7,455.0 678.3,462.5 688.3,453.3 700.0,448.7 716.7,449.2 728.3,445.0 741.7,436.7 755.0,426.7 770.0,418.3 783.3,410.0 793.3,406.0 803.3,398.0 813.3,391.7 820.0,390.8 831.7,395.0 845.0,400.0 866.7,401.7 875.0,403.3 883.3,406.7 896.7,405.8 908.3,407.5 921.7,411.7 930.0,418.0 940.0,431.0 948.3,441.7 956.7,456.7 966.7,468.3 977.5,475.8 988.3,473.3 998.3,468.3 1010.0,461.7 1023.3,456.7 1031.7,453.0 1043.3,460.8 1053.3,458.3 1065.0,454.2 1075.0,452.5 1085.0,448.0" fill="none" stroke="#b84040" stroke-width="1.4" stroke-linejoin="round"/><g stroke="#8fe07a" stroke-width="1.3"><line x1="464.2" y1="291.0" x2="464.2" y2="353.0"/><rect x="461.5" y="303.1" width="5.3" height="38.7" fill="#000"/><line x1="474.9" y1="285.0" x2="474.9" y2="321.0"/><rect x="472.3" y="286.6" width="5.3" height="15.7" fill="#000"/><line x1="485.6" y1="242.5" x2="485.6" y2="297.0"/><rect x="483.0" y="247.3" width="5.3" height="38.0" fill="#000"/><line x1="496.3" y1="210.0" x2="496.3" y2="243.0"/><rect x="493.7" y="212.7" width="5.3" height="27.7" fill="#000"/><line x1="507.0" y1="200.0" x2="507.0" y2="252.5"/><rect x="504.4" y="205.7" width="5.3" height="8.7" fill="#000"/><line x1="528.5" y1="210.0" x2="528.5" y2="290.0"/><rect x="525.2" y="212.4" width="6.5" height="68.9" fill="#e8ffe0" stroke-width="0.9"/><line x1="539.2" y1="268.3" x2="539.2" y2="487.5"/><rect x="535.9" y="279.1" width="6.5" height="187.2" fill="#e8ffe0" stroke-width="0.9"/><line x1="549.9" y1="436.7" x2="549.9" y2="505.8"/><rect x="546.6" y="469.6" width="6.5" height="10.0" fill="#e8ffe0" stroke-width="0.9"/><line x1="560.6" y1="425.8" x2="560.6" y2="501.7"/><rect x="557.9" y="475.9" width="5.3" height="3.7" fill="#000"/><line x1="571.3" y1="458.0" x2="571.3" y2="536.7"/><rect x="568.0" y="472.9" width="6.5" height="45.9" fill="#e8ffe0" stroke-width="0.9"/><line x1="582.0" y1="490.0" x2="582.0" y2="536.7"/><rect x="579.4" y="512.6" width="5.3" height="5.9" fill="#000"/><line x1="592.7" y1="500.8" x2="592.7" y2="530.0"/><rect x="589.5" y="514.6" width="6.5" height="8.0" fill="#e8ffe0" stroke-width="0.9"/><line x1="603.4" y1="514.2" x2="603.4" y2="562.0"/><rect x="600.2" y="522.9" width="6.5" height="28.0" fill="#e8ffe0" stroke-width="0.9"/><line x1="614.1" y1="511.7" x2="614.1" y2="554.2"/><rect x="611.5" y="514.9" width="5.3" height="35.8" fill="#000"/><line x1="624.9" y1="444.2" x2="624.9" y2="519.2"/><rect x="622.2" y="466.9" width="5.3" height="51.6" fill="#000"/><line x1="635.6" y1="405.0" x2="635.6" y2="470.0"/><rect x="632.9" y="413.1" width="5.3" height="52.9" fill="#000"/><line x1="646.3" y1="377.5" x2="646.3" y2="424.2"/><rect x="643.6" y="388.1" width="5.3" height="24.5" fill="#000"/><line x1="657.0" y1="380.0" x2="657.0" y2="435.0"/><rect x="653.7" y="387.9" width="6.5" height="42.5" fill="#e8ffe0" stroke-width="0.9"/><line x1="667.7" y1="373.8" x2="667.7" y2="430.8"/><rect x="665.0" y="378.1" width="5.3" height="52.0" fill="#000"/><line x1="678.4" y1="339.2" x2="678.4" y2="383.3"/><rect x="675.8" y="342.3" width="5.3" height="38.7" fill="#000"/><line x1="689.1" y1="302.5" x2="689.1" y2="406.7"/><rect x="685.9" y="345.7" width="6.5" height="11.4" fill="#e8ffe0" stroke-width="0.9"/><line x1="699.8" y1="356.7" x2="699.8" y2="435.0"/><rect x="696.6" y="359.6" width="6.5" height="66.7" fill="#e8ffe0" stroke-width="0.9"/><line x1="710.5" y1="425.8" x2="710.5" y2="501.7"/><rect x="707.3" y="430.4" width="6.5" height="56.2" fill="#e8ffe0" stroke-width="0.9"/><line x1="721.2" y1="421.7" x2="721.2" y2="511.7"/><rect x="718.0" y="486.7" width="6.5" height="18.2" fill="#e8ffe0" stroke-width="0.9"/><line x1="732.0" y1="434.2" x2="732.0" y2="515.0"/><rect x="729.3" y="434.8" width="5.3" height="65.8" fill="#000"/><line x1="742.7" y1="419.7" x2="742.7" y2="484.2"/><rect x="740.0" y="423.9" width="5.3" height="12.9" fill="#000"/><line x1="753.4" y1="363.3" x2="753.4" y2="416.7"/><rect x="750.7" y="413.1" width="5.3" height="2.9" fill="#000"/><line x1="764.1" y1="412.5" x2="764.1" y2="455.0"/><rect x="760.8" y="412.9" width="6.5" height="32.0" fill="#e8ffe0" stroke-width="0.9"/><line x1="774.8" y1="370.0" x2="774.8" y2="448.3"/><rect x="772.1" y="395.9" width="5.3" height="40.4" fill="#000"/><line x1="785.5" y1="302.5" x2="785.5" y2="398.3"/><rect x="782.9" y="307.6" width="5.3" height="83.0" fill="#000"/><line x1="796.2" y1="280.8" x2="796.2" y2="346.3"/><rect x="793.0" y="302.9" width="6.5" height="43.0" fill="#e8ffe0" stroke-width="0.9"/><line x1="806.9" y1="252.5" x2="806.9" y2="359.7"/><rect x="804.3" y="264.8" width="5.3" height="77.0" fill="#000"/><line x1="817.6" y1="252.5" x2="817.6" y2="339.7"/><rect x="814.4" y="268.4" width="6.5" height="70.9" fill="#e8ffe0" stroke-width="0.9"/><line x1="828.3" y1="339.2" x2="828.3" y2="402.5"/><rect x="825.1" y="339.6" width="6.5" height="27.5" fill="#e8ffe0" stroke-width="0.9"/><line x1="839.0" y1="359.2" x2="839.0" y2="455.8"/><rect x="835.8" y="370.1" width="6.5" height="77.8" fill="#e8ffe0" stroke-width="0.9"/><line x1="849.8" y1="396.7" x2="849.8" y2="459.2"/><rect x="847.1" y="440.9" width="5.3" height="10.4" fill="#000"/><line x1="860.5" y1="440.3" x2="860.5" y2="512.5"/><rect x="857.2" y="440.7" width="6.5" height="60.2" fill="#e8ffe0" stroke-width="0.9"/><line x1="871.2" y1="450.8" x2="871.2" y2="522.5"/><line x1="867.9" y1="501.3" x2="874.5" y2="501.3"/><line x1="881.9" y1="479.2" x2="881.9" y2="522.5"/><rect x="878.6" y="505.4" width="6.5" height="16.7" fill="#e8ffe0" stroke-width="0.9"/><line x1="892.6" y1="363.3" x2="892.6" y2="522.5"/><rect x="890.0" y="388.1" width="5.3" height="130.4" fill="#000"/><line x1="903.3" y1="369.2" x2="903.3" y2="452.0"/><rect x="900.1" y="384.6" width="6.5" height="63.3" fill="#e8ffe0" stroke-width="0.9"/><line x1="914.0" y1="406.7" x2="914.0" y2="480.8"/><line x1="910.7" y1="452.0" x2="917.3" y2="452.0"/><line x1="924.7" y1="434.2" x2="924.7" y2="473.3"/><rect x="921.5" y="447.9" width="6.5" height="3.7" fill="#e8ffe0" stroke-width="0.9"/><line x1="935.4" y1="421.7" x2="935.4" y2="520.0"/><rect x="932.2" y="445.1" width="6.5" height="49.5" fill="#e8ffe0" stroke-width="0.9"/><line x1="946.2" y1="479.2" x2="946.2" y2="534.2"/><rect x="942.9" y="497.1" width="6.5" height="27.5" fill="#e8ffe0" stroke-width="0.9"/><line x1="956.9" y1="500.0" x2="956.9" y2="558.3"/><rect x="954.2" y="523.1" width="5.3" height="1.5" fill="#000"/><line x1="967.6" y1="500.8" x2="967.6" y2="565.0"/><rect x="964.9" y="501.4" width="5.3" height="17.1" fill="#000"/><line x1="978.3" y1="469.2" x2="978.3" y2="520.0"/><rect x="975.6" y="486.9" width="5.3" height="13.7" fill="#000"/><line x1="989.0" y1="373.3" x2="989.0" y2="486.7"/><rect x="986.3" y="388.1" width="5.3" height="97.9" fill="#000"/><line x1="999.7" y1="369.7" x2="999.7" y2="409.2"/><rect x="997.1" y="378.1" width="5.3" height="8.7" fill="#000"/><line x1="1010.4" y1="369.7" x2="1010.4" y2="413.3"/><rect x="1007.2" y="374.2" width="6.5" height="23.7" fill="#e8ffe0" stroke-width="0.9"/><line x1="1021.1" y1="386.7" x2="1021.1" y2="455.8"/><rect x="1017.9" y="398.7" width="6.5" height="49.2" fill="#e8ffe0" stroke-width="0.9"/><line x1="1031.8" y1="444.2" x2="1031.8" y2="487.5"/><rect x="1028.6" y="447.9" width="6.5" height="20.9" fill="#e8ffe0" stroke-width="0.9"/><line x1="1042.5" y1="458.3" x2="1042.5" y2="487.5"/><rect x="1039.3" y="469.6" width="6.5" height="14.2" fill="#e8ffe0" stroke-width="0.9"/><line x1="1053.2" y1="440.3" x2="1053.2" y2="487.5"/><rect x="1050.6" y="445.3" width="5.3" height="34.3" fill="#000"/><line x1="1064.0" y1="386.7" x2="1064.0" y2="448.3"/><rect x="1061.3" y="391.9" width="5.3" height="48.2" fill="#000"/><line x1="1074.7" y1="391.3" x2="1074.7" y2="424.2"/><rect x="1071.4" y="391.7" width="6.5" height="17.1" fill="#e8ffe0" stroke-width="0.9"/><line x1="1085.4" y1="355.8" x2="1085.4" y2="426.7"/><rect x="1082.7" y="406.4" width="5.3" height="2.1" fill="#000"/></g></g><path d="M463 593.8V132.6H1109.8V593.8Z" fill="none" stroke="#fff" stroke-width="1.4"/><line x1="1110" y1="152.0" x2="1114" y2="152.0" stroke="#fff" stroke-width="1.3"/><line x1="1110" y1="204.9" x2="1114" y2="204.9" stroke="#fff" stroke-width="1.3"/><line x1="1110" y1="257.7" x2="1114" y2="257.7" stroke="#fff" stroke-width="1.3"/><line x1="1110" y1="310.6" x2="1114" y2="310.6" stroke="#fff" stroke-width="1.3"/><line x1="1110" y1="363.5" x2="1114" y2="363.5" stroke="#fff" stroke-width="1.3"/><line x1="1110" y1="416.3" x2="1114" y2="416.3" stroke="#fff" stroke-width="1.3"/><line x1="1110" y1="469.2" x2="1114" y2="469.2" stroke="#fff" stroke-width="1.3"/><line x1="1110" y1="522.1" x2="1114" y2="522.1" stroke="#fff" stroke-width="1.3"/><line x1="1110" y1="575.0" x2="1114" y2="575.0" stroke="#fff" stroke-width="1.3"/><line x1="464.2" y1="594" x2="464.2" y2="599" stroke="#fff" stroke-width="1.3"/><line x1="549.9" y1="594" x2="549.9" y2="599" stroke="#fff" stroke-width="1.3"/><line x1="635.6" y1="594" x2="635.6" y2="599" stroke="#fff" stroke-width="1.3"/><line x1="721.2" y1="594" x2="721.2" y2="599" stroke="#fff" stroke-width="1.3"/><line x1="806.9" y1="594" x2="806.9" y2="599" stroke="#fff" stroke-width="1.3"/><line x1="892.6" y1="594" x2="892.6" y2="599" stroke="#fff" stroke-width="1.3"/><line x1="978.3" y1="594" x2="978.3" y2="599" stroke="#fff" stroke-width="1.3"/><line x1="1064.0" y1="594" x2="1064.0" y2="599" stroke="#fff" stroke-width="1.3"/><text x="1117" y="156.4" style="font-family:'Liberation Sans',sans-serif;font-size:12.3px" fill="#fff">1.04775</text><text x="1117" y="209.3" style="font-family:'Liberation Sans',sans-serif;font-size:12.3px" fill="#fff">1.04760</text><text x="1117" y="262.1" style="font-family:'Liberation Sans',sans-serif;font-size:12.3px" fill="#fff">1.04745</text><text x="1117" y="315.0" style="font-family:'Liberation Sans',sans-serif;font-size:12.3px" fill="#fff">1.04730</text><text x="1117" y="367.9" style="font-family:'Liberation Sans',sans-serif;font-size:12.3px" fill="#fff">1.04715</text><text x="1117" y="420.7" style="font-family:'Liberation Sans',sans-serif;font-size:12.3px" fill="#fff">1.04700</text><text x="1117" y="473.6" style="font-family:'Liberation Sans',sans-serif;font-size:12.3px" fill="#fff">1.04685</text><text x="1117" y="526.5" style="font-family:'Liberation Sans',sans-serif;font-size:12.3px" fill="#fff">1.04670</text><text x="1117" y="579.4" style="font-family:'Liberation Sans',sans-serif;font-size:12.3px" fill="#fff">1.04655</text><rect x="1112.5" y="399" width="53" height="14.5" fill="#fff"/><text x="1117" y="410.6" style="font-family:'Liberation Sans',sans-serif;font-size:12.3px" fill="#000">1.04703</text><text x="461.5" y="610.3" style="font-family:'Liberation Sans',sans-serif;font-size:12.3px" fill="#fff">25 Feb 2025</text><text x="547.2" y="610.3" style="font-family:'Liberation Sans',sans-serif;font-size:12.3px" fill="#fff">25 Feb 09:04</text><text x="632.9" y="610.3" style="font-family:'Liberation Sans',sans-serif;font-size:12.3px" fill="#fff">25 Feb 09:12</text><text x="718.5" y="610.3" style="font-family:'Liberation Sans',sans-serif;font-size:12.3px" fill="#fff">25 Feb 09:20</text><text x="804.2" y="610.3" style="font-family:'Liberation Sans',sans-serif;font-size:12.3px" fill="#fff">25 Feb 09:28</text><text x="889.9" y="610.3" style="font-family:'Liberation Sans',sans-serif;font-size:12.3px" fill="#fff">25 Feb 09:36</text><text x="975.6" y="610.3" style="font-family:'Liberation Sans',sans-serif;font-size:12.3px" fill="#fff">25 Feb 09:44</text><text x="1061.3" y="610.3" style="font-family:'Liberation Sans',sans-serif;font-size:12.3px" fill="#fff">25 Feb 09:52</text><defs><linearGradient id="g1b468" x1="0" y1="0" x2="0" y2="1"><stop offset="0" stop-color="#4a4af8"/><stop offset="1" stop-color="#3030d8"/></linearGradient><linearGradient id="g2b468" x1="0" y1="0" x2="0" y2="1"><stop offset="0" stop-color="#3838e0"/><stop offset="1" stop-color="#101090"/></linearGradient></defs><rect x="464" y="150.3" width="255.5" height="78" fill="#000"/><path d="M467 152.3h59.5v26.3h66v-0.5h3v0.5h66v-26.3h59.5v75.3h-127v-2h-1v2h-126z" fill="#00006c"/><rect x="468" y="153.3" width="57.5" height="26.5" fill="url(#g1b468)"/><rect x="660.5" y="153.3" width="57.5" height="26.5" fill="url(#g1b468)"/><rect x="468" y="179.60000000000002" width="123.5" height="47" fill="url(#g2b468)"/><rect x="594.5" y="179.60000000000002" width="123.5" height="47" fill="url(#g2b468)"/><rect x="591.6" y="178.9" width="2.8" height="49" fill="#000"/><line x1="472.5" y1="179.9" x2="520" y2="179.9" stroke="#7078f0" stroke-width="1.2"/><line x1="665" y1="179.9" x2="713" y2="179.9" stroke="#7078f0" stroke-width="1.2"/><text x="496.2" y="172.70000000000002" text-anchor="middle" style="font-family:'Liberation Sans',sans-serif;font-size:14.4px;letter-spacing:-0.9px" fill="#d0d4ff">SELL</text><text x="689.5" y="172.70000000000002" text-anchor="middle" style="font-family:'Liberation Sans',sans-serif;font-size:14.4px;letter-spacing:-0.9px" fill="#d0d4ff">BUY</text><rect x="529" y="153.0" width="127.5" height="24" fill="#fff" stroke="#d0d0d0" stroke-width="1"/><line x1="552.3" y1="153.3" x2="552.3" y2="176.8" stroke="#c8c8c8" stroke-width="1.2"/><line x1="634" y1="153.3" x2="634" y2="176.8" stroke="#c8c8c8" stroke-width="1.2"/><path d="M537.5 162.3l3.5 3.6l3.5 -3.6" fill="none" stroke="#707070" stroke-width="1.3"/><path d="M641 166.10000000000002l3.5 -3.6l3.5 3.6" fill="none" stroke="#707070" stroke-width="1.3"/><text x="626.4" y="171.70000000000002" text-anchor="end" style="font-family:'Liberation Sans',sans-serif;font-size:14.2px" fill="#222">1.00</text><text x="485" y="219.60000000000002" style="font-family:'Liberation Sans',sans-serif;font-size:15px;font-weight:bold;letter-spacing:0.9px" fill="#f4f4ff">1.04</text><text x="520.6" y="218.70000000000002" style="font-family:'Liberation Sans',sans-serif;font-size:43px;letter-spacing:-1px" fill="#fff">70</text><text x="570.5" y="197.3" style="font-family:'Liberation Sans',sans-serif;font-size:15.4px;font-weight:bold" fill="#f4f4ff">3</text><text x="611" y="219.60000000000002" style="font-family:'Liberation Sans',sans-serif;font-size:15px;font-weight:bold;letter-spacing:0.9px" fill="#f4f4ff">1.04</text><text x="646.6" y="218.70000000000002" style="font-family:'Liberation Sans',sans-serif;font-size:43px;letter-spacing:-1px" fill="#fff">72</text><text x="696.5" y="197.3" style="font-family:'Liberation Sans',sans-serif;font-size:15.4px;font-weight:bold" fill="#f4f4ff">2</text><path d="M467.4 146.6L472.2 141L477 146.6Z" fill="#fff"/><text x="482.5" y="147.2" style="font-family:'Liberation Sans',sans-serif;font-size:12.3px;letter-spacing:0.09px" fill="#fff" xml:space="preserve">EURUSD,M1  1.04702 1.04717 1.04697 1.04703</text>
<rect x="1186.6" y="129.4" width="364" height="492.5" fill="#000"/><g stroke="#949ca8" stroke-width="1.3" stroke-dasharray="4.4 3.6" fill="none"><line x1="1233.9" y1="133" x2="1233.9" y2="594" stroke-dasharray="4.4 3.6"/><line x1="1276.8" y1="133" x2="1276.8" y2="594" stroke-dasharray="4.4 3.6"/><line x1="1319.6" y1="133" x2="1319.6" y2="594" stroke-dasharray="4.4 3.6"/><line x1="1362.5" y1="133" x2="1362.5" y2="594" stroke-dasharray="4.4 3.6"/><line x1="1405.3" y1="133" x2="1405.3" y2="594" stroke-dasharray="4.4 3.6"/><line x1="1448.1" y1="133" x2="1448.1" y2="594" stroke-dasharray="4.4 3.6"/><line x1="1491.0" y1="133" x2="1491.0" y2="594" stroke-dasharray="4.4 3.6"/><line x1="1533.8" y1="133" x2="1533.8" y2="594" stroke-dasharray="4.4 3.6"/><line x1="1191" y1="149.5" x2="1550" y2="149.5"/><line x1="1191" y1="193.6" x2="1550" y2="193.6"/><line x1="1191" y1="237.8" x2="1550" y2="237.8"/><line x1="1191" y1="281.9" x2="1550" y2="281.9"/><line x1="1191" y1="326.0" x2="1550" y2="326.0"/><line x1="1191" y1="370.1" x2="1550" y2="370.1"/><line x1="1191" y1="414.3" x2="1550" y2="414.3"/><line x1="1191" y1="458.4" x2="1550" y2="458.4"/><line x1="1191" y1="502.5" x2="1550" y2="502.5"/><line x1="1191" y1="546.7" x2="1550" y2="546.7"/><line x1="1191" y1="590.8" x2="1550" y2="590.8"/></g><line x1="1190.5" y1="226.6" x2="1550" y2="226.6" stroke="#a8acb4" stroke-width="1.3"/><clipPath id="cp2"><rect x="1190.4" y="133" width="360" height="461"/></clipPath><g clip-path="url(#cp2)"><polyline points="1191.2,381.3 1200.7,380.0 1206.5,378.0 1214.0,381.7 1223.2,385.8 1234.0,392.5 1244.0,397.5 1254.0,400.8 1267.3,400.8 1277.3,402.5 1292.3,405.3 1303.5,404.6 1310.0,416.7 1315.7,430.0 1322.3,440.8 1330.7,446.7 1340.7,450.0 1350.7,451.7 1359.0,448.3 1365.7,443.8 1374.0,440.5 1380.7,432.5 1387.0,414.0 1393.6,395.5 1400.5,379.0 1405.5,370.8 1415.5,367.5 1428.0,366.9 1434.0,368.3 1440.0,371.0 1453.3,379.2 1463.3,393.3 1473.3,408.3 1485.0,420.8 1495.0,426.7 1506.7,436.7 1516.7,444.2 1525.0,446.7 1536.0,441.7" fill="none" stroke="#b84040" stroke-width="1.4" stroke-linejoin="round"/><g stroke="#8fe07a" stroke-width="1.3" fill="none"><path d="M1191.1 381.7V413.3M1188.9 397.5H1191.1M1191.1 405.4H1193.3"/><path d="M1196.5 386.7V424.2M1194.3 405.4H1196.5M1196.5 404.1H1198.7"/><path d="M1201.8 390.8V417.5M1199.6 404.1H1201.8M1201.8 405.0H1204.0"/><path d="M1207.2 394.2V415.8M1205.0 405.0H1207.2M1207.2 397.9H1209.4"/><path d="M1212.5 390.8V405.0M1210.3 397.9H1212.5M1212.5 394.1H1214.7"/><path d="M1217.9 383.3V405.0M1215.7 394.1H1217.9M1217.9 399.1H1220.1"/><path d="M1223.2 375.8V422.5M1221.0 399.1H1223.2M1223.2 421.5H1225.4"/><path d="M1228.6 409.2V445.8M1226.4 421.5H1228.6M1228.6 415.9H1230.8"/><path d="M1233.9 390.0V441.7M1231.7 415.9H1233.9M1233.9 404.2H1236.1"/><path d="M1239.3 381.7V426.7M1237.1 404.2H1239.3M1239.3 391.2H1241.5"/><path d="M1244.6 378.3V404.2M1242.4 391.2H1244.6M1244.6 389.6H1246.8"/><path d="M1250.0 382.5V396.7M1247.8 389.6H1250.0M1250.0 392.1H1252.2"/><path d="M1255.4 375.8V408.3M1253.2 392.1H1255.4M1255.4 390.9H1257.6"/><path d="M1260.7 367.5V414.2M1258.5 390.9H1260.7M1260.7 383.4H1262.9"/><path d="M1266.1 362.5V404.2M1263.9 383.4H1266.1M1266.1 402.9H1268.3"/><path d="M1271.4 375.0V430.8M1269.2 402.9H1271.4M1271.4 418.4H1273.6"/><path d="M1276.8 405.0V431.7M1274.6 418.4H1276.8M1276.8 417.5H1279.0"/><path d="M1282.1 410.8V424.2M1279.9 417.5H1282.1M1282.1 418.4H1284.3"/><path d="M1287.5 399.2V437.5M1285.3 418.4H1287.5M1287.5 418.8H1289.7"/><path d="M1292.8 405.0V432.5M1290.6 418.8H1292.8M1292.8 409.1H1295.0"/><path d="M1298.2 368.3V450.0M1296.0 409.1H1298.2M1298.2 415.4H1300.4"/><path d="M1303.6 377.5V453.3M1301.4 415.4H1303.6M1303.6 452.3H1305.8"/><path d="M1308.9 511.0V570.0M1306.7 512.0H1308.9M1308.9 564.4H1311.1"/><path d="M1314.3 545.0V583.7M1312.1 564.4H1314.3M1314.3 546.0H1316.5"/><path d="M1319.6 510.0V581.0M1317.4 546.0H1319.6M1319.6 511.0H1321.8"/><path d="M1325.0 461.0V542.5M1322.8 511.0H1325.0M1325.0 462.0H1327.2"/><path d="M1330.3 402.5V501.0M1328.1 462.0H1330.3M1330.3 420.0H1332.5"/><path d="M1335.7 384.2V455.8M1333.5 420.0H1335.7M1335.7 407.1H1337.9"/><path d="M1341.0 385.0V429.2M1338.8 407.1H1341.0M1341.0 428.2H1343.2"/><path d="M1346.4 410.8V459.2M1344.2 428.2H1346.4M1346.4 423.1H1348.6"/><path d="M1351.8 401.7V444.6M1349.5 423.1H1351.8M1351.8 423.4H1354.0"/><path d="M1357.1 404.2V442.5M1354.9 423.4H1357.1M1357.1 405.2H1359.3"/><path d="M1362.5 346.7V410.8M1360.3 405.2H1362.5M1362.5 357.9H1364.7"/><path d="M1367.8 349.2V366.7M1365.6 357.9H1367.8M1367.8 362.1H1370.0"/><path d="M1373.2 350.8V373.3M1371.0 362.1H1373.2M1373.2 367.5H1375.4"/><path d="M1378.5 357.5V377.5M1376.3 367.5H1378.5M1378.5 358.5H1380.7"/><path d="M1383.9 311.7V375.0M1381.7 358.5H1383.9M1383.9 312.7H1386.1"/><path d="M1389.2 291.7V330.0M1387.0 312.7H1389.2M1389.2 322.1H1391.4"/><path d="M1394.6 304.2V340.0M1392.4 322.1H1394.6M1394.6 335.0H1396.8"/><path d="M1399.9 325.8V344.2M1397.7 335.0H1399.9M1399.9 335.4H1402.1"/><path d="M1405.3 325.8V345.0M1403.1 335.4H1405.3M1405.3 344.0H1407.5"/><path d="M1410.7 332.5V357.5M1408.5 344.0H1410.7M1410.7 356.5H1412.9"/><path d="M1416.0 349.2V421.7M1413.8 356.5H1416.0M1416.0 420.7H1418.2"/><path d="M1421.4 407.5V476.7M1419.2 420.7H1421.4M1421.4 425.0H1423.6"/><path d="M1426.7 393.3V456.7M1424.5 425.0H1426.7M1426.7 395.4H1428.9"/><path d="M1432.1 384.2V406.7M1429.9 395.4H1432.1M1432.1 405.0H1434.3"/><path d="M1437.4 395.0V415.0M1435.2 405.0H1437.4M1437.4 408.8H1439.6"/><path d="M1442.8 399.2V418.3M1440.6 408.8H1442.8M1442.8 400.2H1445.0"/><path d="M1448.1 370.0V420.0M1445.9 400.2H1448.1M1448.1 382.5H1450.3"/><path d="M1453.5 346.7V418.3M1451.3 382.5H1453.5M1453.5 417.1H1455.7"/><path d="M1458.8 372.5V461.7M1456.6 417.1H1458.8M1458.8 429.1H1461.0"/><path d="M1464.2 415.0V443.3M1462.0 429.1H1464.2M1464.2 442.3H1466.4"/><path d="M1469.6 436.7V475.0M1467.4 442.3H1469.6M1469.6 443.3H1471.8"/><path d="M1474.9 428.3V458.3M1472.7 443.3H1474.9M1474.9 432.5H1477.1"/><path d="M1480.3 418.3V446.7M1478.1 432.5H1480.3M1480.3 437.5H1482.5"/><path d="M1485.6 416.7V458.3M1483.4 437.5H1485.6M1485.6 454.1H1487.8"/><path d="M1491.0 443.3V465.0M1488.8 454.1H1491.0M1491.0 464.0H1493.2"/><path d="M1496.3 455.8V473.3M1494.1 464.0H1496.3M1496.3 472.3H1498.5"/><path d="M1501.7 465.8V483.3M1499.5 472.3H1501.7M1501.7 482.1H1503.9"/><path d="M1507.0 472.5V491.7M1504.8 482.1H1507.0M1507.0 480.8H1509.2"/><path d="M1512.4 458.3V503.3M1510.2 480.8H1512.4M1512.4 459.3H1514.6"/><path d="M1517.8 438.3V480.0M1515.6 459.3H1517.8M1517.8 439.3H1520.0"/><path d="M1523.1 412.5V441.7M1520.9 439.3H1523.1M1523.1 413.5H1525.3"/><path d="M1528.5 384.2V417.5M1526.3 413.5H1528.5M1528.5 396.7H1530.7"/><path d="M1533.8 381.7V411.7M1531.6 396.7H1533.8M1533.8 396.7H1536.0"/></g></g><path d="M1190 594.6V133.2H1560V594.6Z" fill="none" stroke="#fff" stroke-width="1.4"/><line x1="1191.1" y1="595" x2="1191.1" y2="600" stroke="#fff" stroke-width="1.3"/><line x1="1276.8" y1="595" x2="1276.8" y2="600" stroke="#fff" stroke-width="1.3"/><line x1="1362.5" y1="595" x2="1362.5" y2="600" stroke="#fff" stroke-width="1.3"/><line x1="1448.1" y1="595" x2="1448.1" y2="600" stroke="#fff" stroke-width="1.3"/><line x1="1533.8" y1="595" x2="1533.8" y2="600" stroke="#fff" stroke-width="1.3"/><text x="1188.3" y="611.5" style="font-family:'Liberation Sans',sans-serif;font-size:12.3px" fill="#fff">28 Jan 2025</text><text x="1274.0" y="611.5" style="font-family:'Liberation Sans',sans-serif;font-size:12.3px" fill="#fff">31 Jan 00:00</text><text x="1359.7" y="611.5" style="font-family:'Liberation Sans',sans-serif;font-size:12.3px" fill="#fff">4 Feb 16:00</text><text x="1445.3" y="611.5" style="font-family:'Liberation Sans',sans-serif;font-size:12.3px" fill="#fff">7 Feb 08:00</text><text x="1531.0" y="611.5" style="font-family:'Liberation Sans',sans-serif;font-size:12.3px" fill="#fff">11 Feb 00:00</text><defs><linearGradient id="g1b1195" x1="0" y1="0" x2="0" y2="1"><stop offset="0" stop-color="#4a4af8"/><stop offset="1" stop-color="#3030d8"/></linearGradient><linearGradient id="g2b1195" x1="0" y1="0" x2="0" y2="1"><stop offset="0" stop-color="#3838e0"/><stop offset="1" stop-color="#101090"/></linearGradient></defs><rect x="1191.5" y="151.5" width="255.5" height="78" fill="#000"/><path d="M1194.5 153.5h59.5v26.3h66v-0.5h3v0.5h66v-26.3h59.5v75.3h-127v-2h-1v2h-126z" fill="#00006c"/><rect x="1195.5" y="154.5" width="57.5" height="26.5" fill="url(#g1b1195)"/><rect x="1388.0" y="154.5" width="57.5" height="26.5" fill="url(#g1b1195)"/><rect x="1195.5" y="180.8" width="123.5" height="47" fill="url(#g2b1195)"/><rect x="1322.0" y="180.8" width="123.5" height="47" fill="url(#g2b1195)"/><rect x="1319.1" y="180.1" width="2.8" height="49" fill="#000"/><line x1="1200.0" y1="181.1" x2="1247.5" y2="181.1" stroke="#7078f0" stroke-width="1.2"/><line x1="1392.5" y1="181.1" x2="1440.5" y2="181.1" stroke="#7078f0" stroke-width="1.2"/><text x="1223.7" y="173.9" text-anchor="middle" style="font-family:'Liberation Sans',sans-serif;font-size:14.4px;letter-spacing:-0.9px" fill="#d0d4ff">SELL</text><text x="1417.0" y="173.9" text-anchor="middle" style="font-family:'Liberation Sans',sans-serif;font-size:14.4px;letter-spacing:-0.9px" fill="#d0d4ff">BUY</text><rect x="1256.5" y="154.2" width="127.5" height="24" fill="#fff" stroke="#d0d0d0" stroke-width="1"/><line x1="1279.8" y1="154.5" x2="1279.8" y2="178.0" stroke="#c8c8c8" stroke-width="1.2"/><line x1="1361.5" y1="154.5" x2="1361.5" y2="178.0" stroke="#c8c8c8" stroke-width="1.2"/><path d="M1265.0 163.5l3.5 3.6l3.5 -3.6" fill="none" stroke="#707070" stroke-width="1.3"/><path d="M1368.5 167.3l3.5 -3.6l3.5 3.6" fill="none" stroke="#707070" stroke-width="1.3"/><text x="1353.9" y="172.9" text-anchor="end" style="font-family:'Liberation Sans',sans-serif;font-size:14.2px" fill="#222">1.00</text><text x="1212.5" y="220.8" style="font-family:'Liberation Sans',sans-serif;font-size:15px;font-weight:bold;letter-spacing:0.9px" fill="#f4f4ff">1.26</text><text x="1248.1" y="219.9" style="font-family:'Liberation Sans',sans-serif;font-size:43px;letter-spacing:-1px" fill="#fff">16</text><text x="1298.0" y="198.5" style="font-family:'Liberation Sans',sans-serif;font-size:15.4px;font-weight:bold" fill="#f4f4ff">8</text><text x="1338.5" y="220.8" style="font-family:'Liberation Sans',sans-serif;font-size:15px;font-weight:bold;letter-spacing:0.9px" fill="#f4f4ff">1.26</text><text x="1374.1" y="219.9" style="font-family:'Liberation Sans',sans-serif;font-size:43px;letter-spacing:-1px" fill="#fff">19</text><text x="1424.0" y="198.5" style="font-family:'Liberation Sans',sans-serif;font-size:15.4px;font-weight:bold" fill="#f4f4ff">0</text><path d="M1194.5 148L1199.3 142.4L1204.1 148Z" fill="#fff"/><text x="1209.5" y="148.4" style="font-family:'Liberation Sans',sans-serif;font-size:12.3px;letter-spacing:0.09px" fill="#fff" xml:space="preserve">GBPUSD,H4  1.26362 1.26380 1.26163 1.26168</text>
<rect x="461.8" y="663.8" width="708.4" height="338" fill="#000"/><g stroke="#949ca8" stroke-width="1.3" stroke-dasharray="4.4 3.6" fill="none"><line x1="509.5" y1="668" x2="509.5" y2="914" stroke-dasharray="4.4 3.6"/><line x1="552.4" y1="668" x2="552.4" y2="914" stroke-dasharray="4.4 3.6"/><line x1="595.2" y1="668" x2="595.2" y2="914" stroke-dasharray="4.4 3.6"/><line x1="638.1" y1="668" x2="638.1" y2="914" stroke-dasharray="4.4 3.6"/><line x1="680.9" y1="668" x2="680.9" y2="914" stroke-dasharray="4.4 3.6"/><line x1="723.7" y1="668" x2="723.7" y2="914" stroke-dasharray="4.4 3.6"/><line x1="766.6" y1="668" x2="766.6" y2="914" stroke-dasharray="4.4 3.6"/><line x1="809.4" y1="668" x2="809.4" y2="914" stroke-dasharray="4.4 3.6"/><line x1="852.3" y1="668" x2="852.3" y2="914" stroke-dasharray="4.4 3.6"/><line x1="895.1" y1="668" x2="895.1" y2="914" stroke-dasharray="4.4 3.6"/><line x1="937.9" y1="668" x2="937.9" y2="914" stroke-dasharray="4.4 3.6"/><line x1="980.8" y1="668" x2="980.8" y2="914" stroke-dasharray="4.4 3.6"/><line x1="1023.6" y1="668" x2="1023.6" y2="914" stroke-dasharray="4.4 3.6"/><line x1="1066.5" y1="668" x2="1066.5" y2="914" stroke-dasharray="4.4 3.6"/><line x1="466.5" y1="690.0" x2="1109" y2="690.0"/><line x1="466.5" y1="734.2" x2="1109" y2="734.2"/><line x1="466.5" y1="778.4" x2="1109" y2="778.4"/><line x1="466.5" y1="822.6" x2="1109" y2="822.6"/><line x1="466.5" y1="866.8" x2="1109" y2="866.8"/><line x1="466.5" y1="911.0" x2="1109" y2="911.0"/></g><g stroke="#949ca8" stroke-width="1.3" stroke-dasharray="4.4 3.6" fill="none"><line x1="509.5" y1="919" x2="509.5" y2="1002" stroke-dasharray="4.4 3.6"/><line x1="552.4" y1="919" x2="552.4" y2="1002" stroke-dasharray="4.4 3.6"/><line x1="595.2" y1="919" x2="595.2" y2="1002" stroke-dasharray="4.4 3.6"/><line x1="638.1" y1="919" x2="638.1" y2="1002" stroke-dasharray="4.4 3.6"/><line x1="680.9" y1="919" x2="680.9" y2="1002" stroke-dasharray="4.4 3.6"/><line x1="723.7" y1="919" x2="723.7" y2="1002" stroke-dasharray="4.4 3.6"/><line x1="766.6" y1="919" x2="766.6" y2="1002" stroke-dasharray="4.4 3.6"/><line x1="809.4" y1="919" x2="809.4" y2="1002" stroke-dasharray="4.4 3.6"/><line x1="852.3" y1="919" x2="852.3" y2="1002" stroke-dasharray="4.4 3.6"/><line x1="895.1" y1="919" x2="895.1" y2="1002" stroke-dasharray="4.4 3.6"/><line x1="937.9" y1="919" x2="937.9" y2="1002" stroke-dasharray="4.4 3.6"/><line x1="980.8" y1="919" x2="980.8" y2="1002" stroke-dasharray="4.4 3.6"/><line x1="1023.6" y1="919" x2="1023.6" y2="1002" stroke-dasharray="4.4 3.6"/><line x1="1066.5" y1="919" x2="1066.5" y2="1002" stroke-dasharray="4.4 3.6"/><line x1="466.5" y1="975.0" x2="1109" y2="975.0"/></g><line x1="466" y1="896.2" x2="1110" y2="896.2" stroke="#a8acb4" stroke-width="1.3"/><clipPath id="cp3"><rect x="466" y="668" width="643.5" height="246"/></clipPath><g clip-path="url(#cp3)"><g stroke="#8fe07a" stroke-width="1.3" fill="none"><path d="M466.7 816.7V830.8M464.5 823.8H466.7M466.7 829.1H468.9"/><path d="M472.1 823.3V835.0M469.9 829.1H472.1M472.1 830.5H474.3"/><path d="M477.4 824.2V836.7M475.2 830.5H477.4M477.4 825.2H479.6"/><path d="M482.8 805.0V835.0M480.6 825.2H482.8M482.8 806.0H485.0"/><path d="M488.1 788.3V812.5M485.9 806.0H488.1M488.1 800.0H490.3"/><path d="M493.5 787.5V812.5M491.3 800.0H493.5M493.5 794.1H495.7"/><path d="M498.8 775.0V813.3M496.6 794.1H498.8M498.8 803.4H501.0"/><path d="M504.2 797.5V809.2M502.0 803.4H504.2M504.2 801.2H506.4"/><path d="M509.5 795.0V807.5M507.3 801.2H509.5M509.5 800.0H511.7"/><path d="M514.9 791.7V808.3M512.7 800.0H514.9M514.9 794.6H517.1"/><path d="M520.3 780.0V809.2M518.1 794.6H520.3M520.3 793.4H522.5"/><path d="M525.6 777.5V809.2M523.4 793.4H525.6M525.6 778.5H527.8"/><path d="M531.0 767.5V789.2M528.8 778.5H531.0M531.0 778.4H533.2"/><path d="M536.3 767.5V789.2M534.1 778.4H536.3M536.3 771.2H538.5"/><path d="M541.7 765.8V776.7M539.5 771.2H541.7M541.7 771.1H543.9"/><path d="M547.0 758.0V784.2M544.8 771.1H547.0M547.0 770.1H549.2"/><path d="M552.4 757.0V783.3M550.2 770.1H552.4M552.4 777.1H554.6"/><path d="M557.8 756.0V798.3M555.6 777.1H557.8M557.8 773.8H560.0"/><path d="M563.1 755.0V792.5M560.9 773.8H563.1M563.1 756.0H565.3"/><path d="M568.5 745.0V760.0M566.3 756.0H568.5M568.5 750.0H570.7"/><path d="M573.8 742.0V758.0M571.6 750.0H573.8M573.8 748.5H576.0"/><path d="M579.2 740.0V757.0M577.0 748.5H579.2M579.2 752.0H581.4"/><path d="M584.5 744.0V760.0M582.3 752.0H584.5M584.5 759.0H586.7"/><path d="M589.9 750.0V770.0M587.7 759.0H589.9M589.9 766.0H592.1"/><path d="M595.2 752.0V780.0M593.0 766.0H595.2M595.2 766.0H597.4"/><path d="M600.6 752.0V780.0M598.4 766.0H600.6M600.6 754.0H602.8"/><path d="M606.0 748.0V760.0M603.8 754.0H606.0M606.0 759.0H608.2"/><path d="M611.3 755.0V782.5M609.1 759.0H611.3M611.3 778.8H613.5"/><path d="M616.7 770.0V787.5M614.5 778.8H616.7M616.7 786.5H618.9"/><path d="M622.0 783.3V818.3M619.8 786.5H622.0M622.0 816.2H624.2"/><path d="M627.4 810.0V822.5M625.2 816.2H627.4M627.4 815.8H629.6"/><path d="M632.7 808.3V823.3M630.5 815.8H632.7M632.7 815.9H634.9"/><path d="M638.1 807.5V824.2M635.9 815.9H638.1M638.1 823.2H640.3"/><path d="M643.4 810.0V849.2M641.2 823.2H643.4M643.4 845.0H645.6"/><path d="M648.8 832.5V857.5M646.6 845.0H648.8M648.8 848.8H651.0"/><path d="M654.2 834.2V863.3M652.0 848.8H654.2M654.2 855.9H656.4"/><path d="M659.5 847.5V864.2M657.3 855.9H659.5M659.5 851.2H661.7"/><path d="M664.9 845.0V857.5M662.7 851.2H664.9M664.9 847.1H667.1"/><path d="M670.2 836.7V857.5M668.0 847.1H670.2M670.2 837.7H672.4"/><path d="M675.6 812.5V840.8M673.4 837.7H675.6M675.6 813.5H677.8"/><path d="M680.9 803.3V822.5M678.7 813.5H680.9M680.9 814.1H683.1"/><path d="M686.3 805.8V822.5M684.1 814.1H686.3M686.3 821.5H688.5"/><path d="M691.7 815.0V828.3M689.5 821.5H691.7M691.7 820.4H693.9"/><path d="M697.0 810.8V830.0M694.8 820.4H697.0M697.0 811.8H699.2"/><path d="M702.4 803.3V813.3M700.2 811.8H702.4M702.4 807.0H704.6"/><path d="M707.7 800.8V813.3M705.5 807.0H707.7M707.7 801.8H709.9"/><path d="M713.1 770.8V822.5M710.9 801.8H713.1M713.1 783.8H715.3"/><path d="M718.4 765.8V801.7M716.2 783.8H718.4M718.4 772.9H720.6"/><path d="M723.8 763.3V782.5M721.6 772.9H723.8M723.8 764.3H726.0"/><path d="M729.1 753.3V770.8M726.9 764.3H729.1M729.1 756.2H731.3"/><path d="M734.5 749.2V763.3M732.3 756.2H734.5M734.5 762.3H736.7"/><path d="M739.9 759.2V775.0M737.7 762.3H739.9M739.9 768.8H742.1"/><path d="M745.2 760.0V777.5M743.0 768.8H745.2M745.2 765.0H747.4"/><path d="M750.6 755.0V775.0M748.4 765.0H750.6M750.6 758.4H752.8"/><path d="M755.9 755.0V761.7M753.7 758.4H755.9M755.9 760.7H758.1"/><path d="M761.3 755.8V770.8M759.1 760.7H761.3M761.3 757.1H763.5"/><path d="M766.6 754.2V760.0M764.4 757.1H766.6M766.6 756.2H768.8"/><path d="M772.0 750.8V761.7M769.8 756.2H772.0M772.0 751.8H774.2"/><path d="M777.3 734.2V757.5M775.1 751.8H777.3M777.3 741.7H779.5"/><path d="M782.7 734.2V749.2M780.5 741.7H782.7M782.7 741.2H784.9"/><path d="M788.1 732.5V750.0M785.9 741.2H788.1M788.1 747.0H790.3"/><path d="M793.4 738.3V755.8M791.2 747.0H793.4M793.4 742.1H795.6"/><path d="M798.8 736.7V747.5M796.6 742.1H798.8M798.8 746.5H801.0"/><path d="M804.1 740.0V770.0M801.9 746.5H804.1M804.1 741.6H806.3"/><path d="M809.5 715.0V768.3M807.3 741.6H809.5M809.5 741.2H811.7"/><path d="M814.8 722.5V760.0M812.6 741.2H814.8M814.8 745.9H817.0"/><path d="M820.2 734.2V757.5M818.0 745.9H820.2M820.2 743.4H822.4"/><path d="M825.6 734.2V752.5M823.4 743.4H825.6M825.6 750.9H827.8"/><path d="M830.9 739.2V762.5M828.7 750.9H830.9M830.9 761.5H833.1"/><path d="M836.3 756.7V799.2M834.1 761.5H836.3M836.3 794.2H838.5"/><path d="M841.6 784.2V804.2M839.4 794.2H841.6M841.6 803.2H843.8"/><path d="M847.0 784.2V830.8M844.8 803.2H847.0M847.0 821.2H849.2"/><path d="M852.3 803.3V839.2M850.1 821.2H852.3M852.3 837.9H854.5"/><path d="M857.7 830.0V845.8M855.5 837.9H857.7M857.7 831.0H859.9"/><path d="M863.0 821.7V837.5M860.8 831.0H863.0M863.0 836.5H865.2"/><path d="M868.4 818.3V855.0M866.2 836.5H868.4M868.4 854.0H870.6"/><path d="M873.8 843.3V879.6M871.6 854.0H873.8M873.8 878.6H876.0"/><path d="M879.1 872.5V891.2M876.9 878.6H879.1M879.1 875.5H881.3"/><path d="M884.5 866.0V885.0M882.3 875.5H884.5M884.5 876.6H886.7"/><path d="M889.8 862.0V891.2M887.6 876.6H889.8M889.8 863.4H892.0"/><path d="M895.2 854.2V872.5M893.0 863.4H895.2M895.2 862.5H897.4"/><path d="M900.5 856.7V868.3M898.3 862.5H900.5M900.5 857.7H902.7"/><path d="M905.9 847.5V861.7M903.7 857.7H905.9M905.9 857.0H908.1"/><path d="M911.2 850.8V863.3M909.0 857.0H911.2M911.2 858.0H913.4"/><path d="M916.6 854.2V861.7M914.4 858.0H916.6M916.6 855.2H918.8"/><path d="M922.0 844.6V864.6M919.8 855.2H922.0M922.0 845.6H924.2"/><path d="M927.3 832.5V850.8M925.1 845.6H927.3M927.3 849.8H929.5"/><path d="M932.7 833.8V870.0M930.5 849.8H932.7M932.7 854.0H934.9"/><path d="M938.0 843.3V864.6M935.8 854.0H938.0M938.0 844.3H940.2"/><path d="M943.4 830.0V853.8M941.2 844.3H943.4M943.4 831.0H945.6"/><path d="M948.7 825.8V835.0M946.5 831.0H948.7M948.7 834.0H950.9"/><path d="M954.1 822.5V848.3M951.9 834.0H954.1M954.1 831.6H956.3"/><path d="M959.5 825.0V838.3M957.3 831.6H959.5M959.5 830.4H961.7"/><path d="M964.8 818.3V842.5M962.6 830.4H964.8M964.8 825.5H967.0"/><path d="M970.2 816.7V834.2M968.0 825.5H970.2M970.2 827.9H972.4"/><path d="M975.5 812.5V843.3M973.3 827.9H975.5M975.5 827.9H977.7"/><path d="M980.9 817.5V838.3M978.7 827.9H980.9M980.9 829.1H983.1"/><path d="M986.2 820.8V837.5M984.0 829.1H986.2M986.2 835.9H988.4"/><path d="M991.6 830.0V841.7M989.4 835.9H991.6M991.6 840.7H993.8"/><path d="M996.9 836.7V847.5M994.7 840.7H996.9M996.9 846.2H999.1"/><path d="M1002.3 835.8V856.7M1000.1 846.2H1002.3M1002.3 855.7H1004.5"/><path d="M1007.7 840.0V883.3M1005.5 855.7H1007.7M1007.7 882.3H1009.9"/><path d="M1013.0 876.7V889.2M1010.8 882.3H1013.0M1013.0 878.3H1015.2"/><path d="M1018.4 868.3V888.3M1016.2 878.3H1018.4M1018.4 877.9H1020.6"/><path d="M1023.7 868.3V887.5M1021.5 877.9H1023.7M1023.7 881.2H1025.9"/><path d="M1029.1 869.2V893.3M1026.9 881.2H1029.1M1029.1 870.9H1031.3"/><path d="M1034.4 859.2V882.5M1032.2 870.9H1034.4M1034.4 875.0H1036.6"/><path d="M1039.8 860.8V889.2M1037.6 875.0H1039.8M1039.8 888.2H1042.0"/><path d="M1045.1 884.2V895.0M1042.9 888.2H1045.1M1045.1 891.6H1047.3"/><path d="M1050.5 878.3V905.0M1048.3 891.6H1050.5M1050.5 903.8H1052.7"/><path d="M1055.9 898.3V909.2M1053.7 903.8H1055.9M1055.9 899.3H1058.1"/><path d="M1061.2 870.0V902.5M1059.0 899.3H1061.2M1061.2 872.5H1063.4"/><path d="M1066.6 865.8V879.2M1064.4 872.5H1066.6M1066.6 878.2H1068.8"/><path d="M1071.9 874.2V900.8M1069.7 878.2H1071.9M1071.9 895.8H1074.1"/><path d="M1077.3 888.3V903.3M1075.1 895.8H1077.3M1077.3 892.9H1079.5"/><path d="M1082.6 885.0V900.8M1080.4 892.9H1082.6M1082.6 890.5H1084.8"/><path d="M1088.0 886.7V894.2M1085.8 890.5H1088.0M1088.0 893.2H1090.2"/><path d="M1093.4 889.2V899.2M1091.2 893.2H1093.4M1093.4 894.2H1095.6"/></g></g><clipPath id="cp4"><rect x="466" y="919" width="643.5" height="83"/></clipPath><g clip-path="url(#cp4)"><g stroke="#c8c8c8" stroke-width="1.3"><line x1="466.7" y1="975" x2="466.7" y2="992.5"/><line x1="472.1" y1="975" x2="472.1" y2="991.2"/><line x1="477.4" y1="975" x2="477.4" y2="990.0"/><line x1="482.8" y1="975" x2="482.8" y2="986.2"/><line x1="488.1" y1="975" x2="488.1" y2="980.0"/><line x1="493.5" y1="975" x2="493.5" y2="976.0"/><line x1="498.8" y1="975" x2="498.8" y2="975.2"/><line x1="504.2" y1="975" x2="504.2" y2="975.0"/><line x1="509.5" y1="975" x2="509.5" y2="974.5"/><line x1="514.9" y1="975" x2="514.9" y2="972.5"/><line x1="520.3" y1="975" x2="520.3" y2="970.0"/><line x1="525.6" y1="975" x2="525.6" y2="966.2"/><line x1="531.0" y1="975" x2="531.0" y2="962.5"/><line x1="536.3" y1="975" x2="536.3" y2="958.8"/><line x1="541.7" y1="975" x2="541.7" y2="956.2"/><line x1="547.0" y1="975" x2="547.0" y2="952.5"/><line x1="552.4" y1="975" x2="552.4" y2="948.8"/><line x1="557.8" y1="975" x2="557.8" y2="955.0"/><line x1="563.1" y1="975" x2="563.1" y2="951.2"/><line x1="568.5" y1="975" x2="568.5" y2="942.5"/><line x1="573.8" y1="975" x2="573.8" y2="933.8"/><line x1="579.2" y1="975" x2="579.2" y2="932.5"/><line x1="584.5" y1="975" x2="584.5" y2="932.5"/><line x1="589.9" y1="975" x2="589.9" y2="933.8"/><line x1="595.2" y1="975" x2="595.2" y2="935.0"/><line x1="600.6" y1="975" x2="600.6" y2="937.5"/><line x1="606.0" y1="975" x2="606.0" y2="941.2"/><line x1="611.3" y1="975" x2="611.3" y2="947.5"/><line x1="616.7" y1="975" x2="616.7" y2="953.8"/><line x1="622.0" y1="975" x2="622.0" y2="965.0"/><line x1="627.4" y1="975" x2="627.4" y2="973.8"/><line x1="632.7" y1="975" x2="632.7" y2="977.5"/><line x1="638.1" y1="975" x2="638.1" y2="985.0"/><line x1="643.4" y1="975" x2="643.4" y2="992.5"/><line x1="648.8" y1="975" x2="648.8" y2="998.8"/><line x1="654.2" y1="975" x2="654.2" y2="1002.5"/><line x1="659.5" y1="975" x2="659.5" y2="1002.5"/><line x1="664.9" y1="975" x2="664.9" y2="1002.5"/><line x1="670.2" y1="975" x2="670.2" y2="1002.5"/><line x1="675.6" y1="975" x2="675.6" y2="1002.5"/><line x1="680.9" y1="975" x2="680.9" y2="1002.5"/><line x1="686.3" y1="975" x2="686.3" y2="1000.0"/><line x1="691.7" y1="975" x2="691.7" y2="998.8"/><line x1="697.0" y1="975" x2="697.0" y2="996.2"/><line x1="702.4" y1="975" x2="702.4" y2="993.8"/><line x1="707.7" y1="975" x2="707.7" y2="990.0"/><line x1="713.1" y1="975" x2="713.1" y2="983.8"/><line x1="718.4" y1="975" x2="718.4" y2="975.0"/><line x1="723.8" y1="975" x2="723.8" y2="968.8"/><line x1="729.1" y1="975" x2="729.1" y2="963.8"/><line x1="734.5" y1="975" x2="734.5" y2="960.0"/><line x1="739.9" y1="975" x2="739.9" y2="957.5"/><line x1="745.2" y1="975" x2="745.2" y2="956.2"/><line x1="750.6" y1="975" x2="750.6" y2="953.8"/><line x1="755.9" y1="975" x2="755.9" y2="951.2"/><line x1="761.3" y1="975" x2="761.3" y2="951.2"/><line x1="766.6" y1="975" x2="766.6" y2="950.0"/><line x1="772.0" y1="975" x2="772.0" y2="948.8"/><line x1="777.3" y1="975" x2="777.3" y2="946.2"/><line x1="782.7" y1="975" x2="782.7" y2="945.0"/><line x1="788.1" y1="975" x2="788.1" y2="943.8"/><line x1="793.4" y1="975" x2="793.4" y2="943.8"/><line x1="798.8" y1="975" x2="798.8" y2="944.5"/><line x1="804.1" y1="975" x2="804.1" y2="945.0"/><line x1="809.5" y1="975" x2="809.5" y2="946.2"/><line x1="814.8" y1="975" x2="814.8" y2="947.5"/><line x1="820.2" y1="975" x2="820.2" y2="948.8"/><line x1="825.6" y1="975" x2="825.6" y2="950.0"/><line x1="830.9" y1="975" x2="830.9" y2="953.8"/><line x1="836.3" y1="975" x2="836.3" y2="961.2"/><line x1="841.6" y1="975" x2="841.6" y2="968.8"/><line x1="847.0" y1="975" x2="847.0" y2="976.2"/><line x1="852.3" y1="975" x2="852.3" y2="996.2"/><line x1="857.7" y1="975" x2="857.7" y2="998.8"/><line x1="863.0" y1="975" x2="863.0" y2="1002.5"/><line x1="868.4" y1="975" x2="868.4" y2="1002.5"/><line x1="873.8" y1="975" x2="873.8" y2="1002.5"/><line x1="879.1" y1="975" x2="879.1" y2="1002.5"/><line x1="884.5" y1="975" x2="884.5" y2="1002.5"/><line x1="889.8" y1="975" x2="889.8" y2="1002.5"/><line x1="895.2" y1="975" x2="895.2" y2="1002.5"/><line x1="900.5" y1="975" x2="900.5" y2="1002.5"/><line x1="905.9" y1="975" x2="905.9" y2="1002.5"/><line x1="911.2" y1="975" x2="911.2" y2="1002.5"/><line x1="916.6" y1="975" x2="916.6" y2="1002.5"/><line x1="922.0" y1="975" x2="922.0" y2="1002.5"/><line x1="927.3" y1="975" x2="927.3" y2="1002.5"/><line x1="932.7" y1="975" x2="932.7" y2="1002.5"/><line x1="938.0" y1="975" x2="938.0" y2="1002.5"/><line x1="943.4" y1="975" x2="943.4" y2="1002.0"/><line x1="948.7" y1="975" x2="948.7" y2="1000.0"/><line x1="954.1" y1="975" x2="954.1" y2="996.2"/><line x1="959.5" y1="975" x2="959.5" y2="993.8"/><line x1="964.8" y1="975" x2="964.8" y2="990.0"/><line x1="970.2" y1="975" x2="970.2" y2="987.5"/><line x1="975.5" y1="975" x2="975.5" y2="982.5"/><line x1="980.9" y1="975" x2="980.9" y2="978.8"/><line x1="986.2" y1="975" x2="986.2" y2="980.0"/><line x1="991.6" y1="975" x2="991.6" y2="981.2"/><line x1="996.9" y1="975" x2="996.9" y2="983.8"/><line x1="1002.3" y1="975" x2="1002.3" y2="986.2"/><line x1="1007.7" y1="975" x2="1007.7" y2="990.0"/><line x1="1013.0" y1="975" x2="1013.0" y2="996.2"/><line x1="1018.4" y1="975" x2="1018.4" y2="998.8"/><line x1="1023.7" y1="975" x2="1023.7" y2="1000.0"/><line x1="1029.1" y1="975" x2="1029.1" y2="1001.2"/><line x1="1034.4" y1="975" x2="1034.4" y2="1002.5"/><line x1="1039.8" y1="975" x2="1039.8" y2="1002.5"/><line x1="1045.1" y1="975" x2="1045.1" y2="1002.5"/><line x1="1050.5" y1="975" x2="1050.5" y2="1002.5"/><line x1="1055.9" y1="975" x2="1055.9" y2="1002.5"/><line x1="1061.2" y1="975" x2="1061.2" y2="1002.5"/><line x1="1066.6" y1="975" x2="1066.6" y2="1002.5"/><line x1="1071.9" y1="975" x2="1071.9" y2="1002.5"/><line x1="1077.3" y1="975" x2="1077.3" y2="1002.5"/><line x1="1082.6" y1="975" x2="1082.6" y2="1002.5"/><line x1="1088.0" y1="975" x2="1088.0" y2="1002.5"/><line x1="1093.4" y1="975" x2="1093.4" y2="1001.2"/></g><polyline points="466.8,1002.5 490.0,988.8 510.0,981.2 527.5,973.8 545.0,965.0 565.0,953.8 582.5,942.5 595.0,937.5 605.0,935.0 615.0,936.2 625.0,941.2 635.0,952.5 645.0,965.0 655.0,980.0 665.0,993.8 672.5,1002.5" fill="none" stroke="#d26870" stroke-width="1.3" stroke-linejoin="round" stroke-dasharray="3.2 2.2"/><polyline points="715.0,1002.5 725.0,992.5 740.0,977.5 755.0,963.8 770.0,953.8 785.0,947.5 800.0,945.5 815.0,945.0 824.0,945.0 831.5,945.8 839.0,950.0 849.0,958.8 859.0,968.8 869.0,981.2 879.0,996.2 883.8,1002.5" fill="none" stroke="#d26870" stroke-width="1.3" stroke-linejoin="round" stroke-dasharray="3.2 2.2"/><polyline points="971.5,1002.5 984.0,992.5 996.5,986.2 1009.0,984.5 1021.5,987.5 1034.0,992.5 1044.0,997.5 1051.5,1002.5" fill="none" stroke="#d26870" stroke-width="1.3" stroke-linejoin="round" stroke-dasharray="3.2 2.2"/></g><path d="M465.7 914.6V667.4H1109.8V914.6Z" fill="none" stroke="#fff" stroke-width="1.4"/><path d="M465.7 1003V918H1109.8V1003" fill="none" stroke="#fff" stroke-width="1.4"/><line x1="1110" y1="690.0" x2="1114" y2="690.0" stroke="#fff" stroke-width="1.3"/><line x1="1110" y1="734.2" x2="1114" y2="734.2" stroke="#fff" stroke-width="1.3"/><line x1="1110" y1="778.4" x2="1114" y2="778.4" stroke="#fff" stroke-width="1.3"/><line x1="1110" y1="822.6" x2="1114" y2="822.6" stroke="#fff" stroke-width="1.3"/><line x1="1110" y1="866.8" x2="1114" y2="866.8" stroke="#fff" stroke-width="1.3"/><line x1="1110" y1="911.0" x2="1114" y2="911.0" stroke="#fff" stroke-width="1.3"/><line x1="1110" y1="975.0" x2="1114" y2="975.0" stroke="#fff" stroke-width="1.3"/><text x="1117" y="694.4" style="font-family:'Liberation Sans',sans-serif;font-size:12.3px" fill="#fff">0.91860</text><text x="1117" y="738.6" style="font-family:'Liberation Sans',sans-serif;font-size:12.3px" fill="#fff">0.91380</text><text x="1117" y="782.8" style="font-family:'Liberation Sans',sans-serif;font-size:12.3px" fill="#fff">0.90910</text><text x="1117" y="827.0" style="font-family:'Liberation Sans',sans-serif;font-size:12.3px" fill="#fff">0.90440</text><text x="1117" y="871.2" style="font-family:'Liberation Sans',sans-serif;font-size:12.3px" fill="#fff">0.89970</text><text x="1117" y="915.4" style="font-family:'Liberation Sans',sans-serif;font-size:12.3px" fill="#fff">0.89490</text><text x="1114" y="931.7" style="font-family:'Liberation Sans',sans-serif;font-size:12.3px" fill="#fff">0.002745</text><text x="1114" y="979.4" style="font-family:'Liberation Sans',sans-serif;font-size:12.3px" fill="#fff">0.00</text><rect x="1112.5" y="889.3" width="53" height="14.5" fill="#fff"/><text x="1117" y="900.8" style="font-family:'Liberation Sans',sans-serif;font-size:12.3px" fill="#000">0.89659</text><defs><linearGradient id="g1r" x1="0" y1="0" x2="0" y2="1"><stop offset="0" stop-color="#e05048"/><stop offset="1" stop-color="#c03030"/></linearGradient><linearGradient id="g2r" x1="0" y1="0" x2="0" y2="1"><stop offset="0" stop-color="#d84040"/><stop offset="1" stop-color="#a02020"/></linearGradient></defs><rect x="466.5" y="686" width="255.5" height="78" fill="#000"/><path d="M469.5 688h59.5v26.3h66v-0.5h3v0.5h66v-26.3h59.5v75.3h-127v-2h-1v2h-126z" fill="#000"/><rect x="470.5" y="689" width="57.5" height="26.5" fill="url(#g1r)"/><rect x="663.0" y="689" width="57.5" height="26.5" fill="url(#g1r)"/><rect x="470.5" y="715.3" width="123.5" height="47" fill="url(#g2r)"/><rect x="597.0" y="715.3" width="123.5" height="47" fill="url(#g2r)"/><rect x="594.1" y="714.6" width="2.8" height="49" fill="#000"/><line x1="475.0" y1="715.6" x2="522.5" y2="715.6" stroke="#f09088" stroke-width="1.2"/><line x1="667.5" y1="715.6" x2="715.5" y2="715.6" stroke="#f09088" stroke-width="1.2"/><text x="498.7" y="708.4" text-anchor="middle" style="font-family:'Liberation Sans',sans-serif;font-size:14.4px;letter-spacing:-0.9px" fill="#ffe0d8">SELL</text><text x="692.0" y="708.4" text-anchor="middle" style="font-family:'Liberation Sans',sans-serif;font-size:14.4px;letter-spacing:-0.9px" fill="#ffe0d8">BUY</text><rect x="531.5" y="688.7" width="127.5" height="24" fill="#fff" stroke="#d0d0d0" stroke-width="1"/><line x1="554.8" y1="689" x2="554.8" y2="712.5" stroke="#c8c8c8" stroke-width="1.2"/><line x1="636.5" y1="689" x2="636.5" y2="712.5" stroke="#c8c8c8" stroke-width="1.2"/><path d="M540.0 698l3.5 3.6l3.5 -3.6" fill="none" stroke="#707070" stroke-width="1.3"/><path d="M643.5 701.8l3.5 -3.6l3.5 3.6" fill="none" stroke="#707070" stroke-width="1.3"/><text x="628.9" y="707.4" text-anchor="end" style="font-family:'Liberation Sans',sans-serif;font-size:14.2px" fill="#222">1.00</text><text x="487.5" y="755.3" style="font-family:'Liberation Sans',sans-serif;font-size:15px;font-weight:bold;letter-spacing:0.9px" fill="#f4f4ff">0.89</text><text x="523.1" y="753.0" style="font-family:'Liberation Sans',sans-serif;font-size:43px;letter-spacing:-1px" fill="#fff">65</text><text x="573.0" y="731.6" style="font-family:'Liberation Sans',sans-serif;font-size:15.4px;font-weight:bold" fill="#f4f4ff">9</text><text x="613.5" y="755.3" style="font-family:'Liberation Sans',sans-serif;font-size:15px;font-weight:bold;letter-spacing:0.9px" fill="#f4f4ff">0.89</text><text x="649.1" y="753.0" style="font-family:'Liberation Sans',sans-serif;font-size:43px;letter-spacing:-1px" fill="#fff">68</text><text x="699.0" y="731.6" style="font-family:'Liberation Sans',sans-serif;font-size:15.4px;font-weight:bold" fill="#f4f4ff">7</text><path d="M470 682L474.8 676.4L479.6 682Z" fill="#fff"/><text x="485" y="682.4" style="font-family:'Liberation Sans',sans-serif;font-size:12.3px" fill="#fff" xml:space="preserve"><tspan style="letter-spacing:0.55px">USDCHF,H4 </tspan> 0.89699 0.89732 0.89620 0.89659</text><text x="470.5" y="934.3" style="font-family:'Liberation Sans',sans-serif;font-size:12.3px;letter-spacing:0.1px" fill="#fff">MACD(12,26,9) -0.001437 -0.001575</text>
<rect x="461.8" y="105.2" width="13.4" height="8" fill="#eef3ff" stroke="#b4c8ec" stroke-width="1"/><rect x="466.0" y="112.0" width="12" height="8.4" fill="#eef3ff" stroke="#b4c8ec" stroke-width="1.2"/><path d="M464.40000000000003 108.2h2.2M467.8 108.2h2.2M471.0 108.2h2M465.2 110.60000000000001h5" stroke="#6c8cc0" stroke-width="1.3"/><path d="M468.0 114.60000000000001l1.7 3.6l1.8 -3.6l1.8 3.6l1.8 -3.6" stroke="#7c6c9c" stroke-width="1.1" fill="none"/><rect x="1189" y="106.8" width="13.4" height="8" fill="#f8faff" stroke="#d4e2fc" stroke-width="1"/><rect x="1193.2" y="113.6" width="12" height="8.4" fill="#f8faff" stroke="#d4e2fc" stroke-width="1.2"/><path d="M1191.6 109.8h2.2M1195 109.8h2.2M1198.2 109.8h2M1192.4 112.2h5" stroke="#6c8cc0" stroke-width="1.3"/><path d="M1195.2 116.2l1.7 3.6l1.8 -3.6l1.8 3.6l1.8 -3.6" stroke="#7c6c9c" stroke-width="1.1" fill="none"/><rect x="464.6" y="640.4" width="13.4" height="8" fill="#eef3ff" stroke="#b4c8ec" stroke-width="1"/><rect x="468.8" y="647.1999999999999" width="12" height="8.4" fill="#eef3ff" stroke="#b4c8ec" stroke-width="1.2"/><path d="M467.20000000000005 643.4h2.2M470.6 643.4h2.2M473.8 643.4h2M468.0 645.8h5" stroke="#6c8cc0" stroke-width="1.3"/><path d="M470.8 649.8l1.7 3.6l1.8 -3.6l1.8 3.6l1.8 -3.6" stroke="#7c6c9c" stroke-width="1.1" fill="none"/>
</svg>
<div class="wb" style="left:1103.1px;top:103.2px"></div><div class="wb" style="left:1124.8999999999999px;top:103.2px"></div><div class="wb" style="left:1148.6px;top:103.2px;width:20.2px"></div>
<div class="wb" style="left:1103.1px;top:638.7px"></div><div class="wb" style="left:1124.8999999999999px;top:638.7px"></div><div class="wb" style="left:1148.6px;top:638.7px;width:20.2px"></div>
<svg width="1536" height="700" viewBox="0 0 1536 700"><rect x="1108.6999999999998" y="115.8" width="7.2" height="2" fill="#202020"/><rect x="1129.6999999999998" y="108.2" width="10.8" height="10.2" fill="none" stroke="#b4b4b4" stroke-width="1.4"/><rect x="1129.1" y="107.5" width="12" height="2.4" fill="#a8a8a8"/><path d="M1154.3 107.60000000000001l10.4 10M1164.6999999999998 107.60000000000001l-10.4 10" stroke="#202020" stroke-width="1.7"/><rect x="1108.6999999999998" y="651.3000000000001" width="7.2" height="2" fill="#202020"/><rect x="1129.6999999999998" y="643.7" width="10.8" height="10.2" fill="none" stroke="#b4b4b4" stroke-width="1.4"/><rect x="1129.1" y="643.0" width="12" height="2.4" fill="#a8a8a8"/><path d="M1154.3 643.1l10.4 10M1164.6999999999998 643.1l-10.4 10" stroke="#202020" stroke-width="1.7"/></svg>
<div class="a" style="left:452px;top:1001px;width:1098px;height:3.4px;background:#fbfbfb"></div>
<div class="a" style="left:452px;top:1004.4px;width:1098px;height:26px;background:#f3f3f3"></div>
<div class="hl" style="left:451px;top:1003.7px;width:1099px;background:#1c1c1c;height:1.7px"></div>
<div class="a" style="left:672.5px;top:1003.4px;width:101.5px;height:24.6px;background:#fff;border:2px solid #181818;border-top:none"></div>
<div class="t" style="left:472px;top:1008.0px;font-size:14.4px;color:#7c7c7c;letter-spacing:-0.8px">EURUSD,M1</div>
<div class="t" style="left:580.6px;top:1008.0px;font-size:14.4px;color:#7c7c7c;letter-spacing:-0.8px">USDCHF,H4</div>
<div class="t" style="left:685.2px;top:1008.0px;font-size:14.4px;color:#000;letter-spacing:-0.8px">GBPUSD,H4</div>
<div class="vl" style="left:565px;top:1008px;height:18px;background:#808080"></div>
<div class="a" style="left:0;top:1030.6px;width:1550px;height:5.4px;background:#f9f9f9"></div>
<div class="hl" style="left:0;top:1029.4px;width:1550px;background:#c4c4c4;height:1.4px"></div>
<div class="vl" style="left:450.6px;top:1004px;height:26px;background:#8c8c8c"></div>
<div class="a" style="left:0;top:1036px;width:20px;height:126px;background:#f6f6f6"></div>
<div class="a" style="left:0;top:1055.5px;width:16.5px;height:107px;background:#808080"></div>
<svg width="1536" height="1162" style="pointer-events:none"><path d="M6.2 1041.3l5.4 5.4m0 -5.4l-5.4 5.4" stroke="#202020" stroke-width="1.5" fill="none"/></svg>
<div class="a" style="left:19px;top:1036.3px;width:1517px;height:126px;background:#fff;border-left:1.3px solid #b0b0b0;border-top:1.3px solid #b0b0b0"></div>
<div class="a" style="left:20.3px;top:1085.8px;width:1530px;height:27.6px;background:#ececec;border-top:1.2px solid #d0d0d0;border-bottom:1.2px solid #d0d0d0"></div>
<div class="a" style="left:20.3px;top:1139.6px;width:1530px;height:40px;background:#ececec;border-top:1.2px solid #d0d0d0"></div>
<div class="vl" style="left:348px;top:1037px;height:125px;background:#d0d0d0"></div>
<div class="t" style="left:27px;top:1042.0px;font-size:14.4px;color:#000;">Name</div>
<div class="t" style="left:356px;top:1042.0px;font-size:14.4px;color:#000;">Description</div>
<div class="t" style="left:47.6px;top:1067.0px;font-size:14.4px;color:#000;">ATR-Adjusted Rate of Change(ROC)</div>
<div class="t" style="left:352.6px;top:1067.0px;font-size:14.4px;color:#000;letter-spacing:0px">Normalized the Rate of Change (ROC) indicator.</div>
<div class="t" style="left:47.6px;top:1093.0px;font-size:14.4px;color:#000;">Profit Shield - EA for MT4</div>
<div class="t" style="left:352.6px;top:1093.0px;font-size:14.4px;color:#000;letter-spacing:0.06px">This EA is designed to automatically close BUY and SELL orders independently based on user-defined profit percentages of the account balance. It allows traders to set separate profit targets</div>
<div class="t" style="left:47.6px;top:1120.0px;font-size:14.4px;color:#000;">BB-Xtreme MT4 EA</div>
<div class="t" style="left:352.6px;top:1120.0px;font-size:14.4px;color:#000;letter-spacing:0.03px">BB-Xtreme EA is a powerful Bollinger Bands breakout system with dynamic lot sizing, stop loss, take profit, slippage control, drawdown protection, and smart risk management.</div>
<div class="t" style="left:47.6px;top:1147.0px;font-size:14.4px;color:#000;">Trade Assistant MT4</div>
<div class="t" style="left:352.6px;top:1147.0px;font-size:14.4px;color:#000;letter-spacing:0.05px">Trade Assistant MetaTrader indicator  a multi-timeframe indicator that is based on three standard indicators: Stochastic oscillator, RSI (Relative Strength Index), and CCI (Commodity Channel Index)</div>
<svg width="1536" height="1162" viewBox="0 0 1536 1162"><rect x="25.6" y="1067.6" width="13" height="13" fill="#f4dc78" stroke="#e8cc60" stroke-width="1"/><path d="M28.6 1077.1999999999998q3 -.4 3.6 -3.2q.6 -3 3.6 -3.2M30.200000000000003 1074.1999999999998h4.4" stroke="#7c5c10" stroke-width="1.3" fill="none"/><path d="M31.799999999999997 1094.4l6.4 2.2l-6.4 2.2l-6.4 -2.2z" fill="#4c7ca8"/><circle cx="31.799999999999997" cy="1100.0" r="2.7" fill="#7ca4cc" stroke="#4c7ca8" stroke-width="1"/><path d="M24.4 1109.0q0 -5 5 -5.6l2.4 2.4l2.4 -2.4q5 .6 5 5.6z" fill="#5c8cb8" stroke="#3c6c98" stroke-width="1"/><rect x="30.599999999999998" y="1105.8000000000002" width="2.4" height="2.4" fill="#e8f0f8"/><path d="M31.799999999999997 1121l6.4 2.2l-6.4 2.2l-6.4 -2.2z" fill="#4c7ca8"/><circle cx="31.799999999999997" cy="1126.6" r="2.7" fill="#7ca4cc" stroke="#4c7ca8" stroke-width="1"/><path d="M24.4 1135.6q0 -5 5 -5.6l2.4 2.4l2.4 -2.4q5 .6 5 5.6z" fill="#5c8cb8" stroke="#3c6c98" stroke-width="1"/><rect x="30.599999999999998" y="1132.4" width="2.4" height="2.4" fill="#e8f0f8"/><rect x="25.6" y="1147.6" width="13" height="13" fill="#f4dc78" stroke="#e8cc60" stroke-width="1"/><path d="M28.6 1157.1999999999998q3 -.4 3.6 -3.2q.6 -3 3.6 -3.2M30.200000000000003 1154.1999999999998h4.4" stroke="#7c5c10" stroke-width="1.3" fill="none"/></svg>
<div class="a" style="left:238.5px;top:272.8px;width:218px;height:337px;background:#fff;border:1.4px solid #a4a4a4;box-shadow:2px 2px 3px rgba(0,0,0,.25)"></div>
<div class="a" style="left:241.5px;top:276px;width:32px;height:331px;background:#f1f1f1"></div>
<div class="a" style="left:238px;top:335px;width:218.5px;height:36.5px;background:#d0dcee;border:6px solid #e8432a"></div>
<div class="t" style="left:284.3px;top:285.0px;font-size:14.4px;color:#101010;"><u>H</u>ide All</div>
<div class="t" style="left:284.3px;top:316.0px;font-size:14.4px;color:#101010;"><u>S</u>how All</div>
<div class="t" style="left:284.3px;top:347.0px;font-size:14.4px;color:#101010;">S<u>y</u>mbols</div>
<div class="t" style="left:284.3px;top:378.0px;font-size:14.4px;color:#101010;">Sets</div>
<div class="t" style="left:284.3px;top:419.0px;font-size:14.4px;color:#101010;">Sp<u>r</u>ead</div>
<div class="t" style="left:284.3px;top:450.0px;font-size:14.4px;color:#101010;">High/<u>L</u>ow</div>
<div class="t" style="left:284.3px;top:481.0px;font-size:14.4px;color:#101010;">Ti<u>m</u>e</div>
<div class="t" style="left:284.3px;top:512.0px;font-size:14.4px;color:#101010;">Auto <u>A</u>rrange</div>
<div class="t" style="left:284.3px;top:543.0px;font-size:14.4px;color:#101010;"><u>G</u>rid</div>
<div class="t" style="left:284.3px;top:584.0px;font-size:14.4px;color:#101010;"><u>P</u>opup Prices</div>
<div class="t" style="left:391.5px;top:347.0px;font-size:14.4px;color:#101010;">Ctrl+U</div>
<div class="t" style="left:411.5px;top:584.0px;font-size:14.4px;color:#101010;">F10</div>
<div class="hl" style="left:285px;top:405.6px;width:168px;background:#e0e0e0"></div>
<div class="hl" style="left:285px;top:570.8px;width:168px;background:#e0e0e0"></div>
<svg width="1536" height="700" viewBox="0 0 1536 700"><path d="M254.79999999999998 428.4l3 3.2l5.6 -6.8" stroke="#101010" stroke-width="2.3" fill="none"/><path d="M254.79999999999998 520.6l3 3.2l5.6 -6.8" stroke="#101010" stroke-width="2.3" fill="none"/><path d="M254.79999999999998 551.4l3 3.2l5.6 -6.8" stroke="#101010" stroke-width="2.3" fill="none"/><path d="M437.6 381.2l4.2 3.9l-4.2 3.9z" fill="#101010"/><rect x="248.6" y="583.2" width="18.4" height="16.4" fill="#0c1438" stroke="#3c5c9c" stroke-width="1.2"/><path d="M251 587.4h3M251 590.6h3M251 593.8h3M251 596.6h3" stroke="#b0c4e8" stroke-width="1.2" stroke-dasharray="1.5 1"/><path d="M259 587.4h5.6M259 590.6h5.6M259 593.8h5.6M259 596.6h5.6" stroke="#7c8cb0" stroke-width="1.2" stroke-dasharray="1.2 1"/></svg>
</div></div></div></body></html>
